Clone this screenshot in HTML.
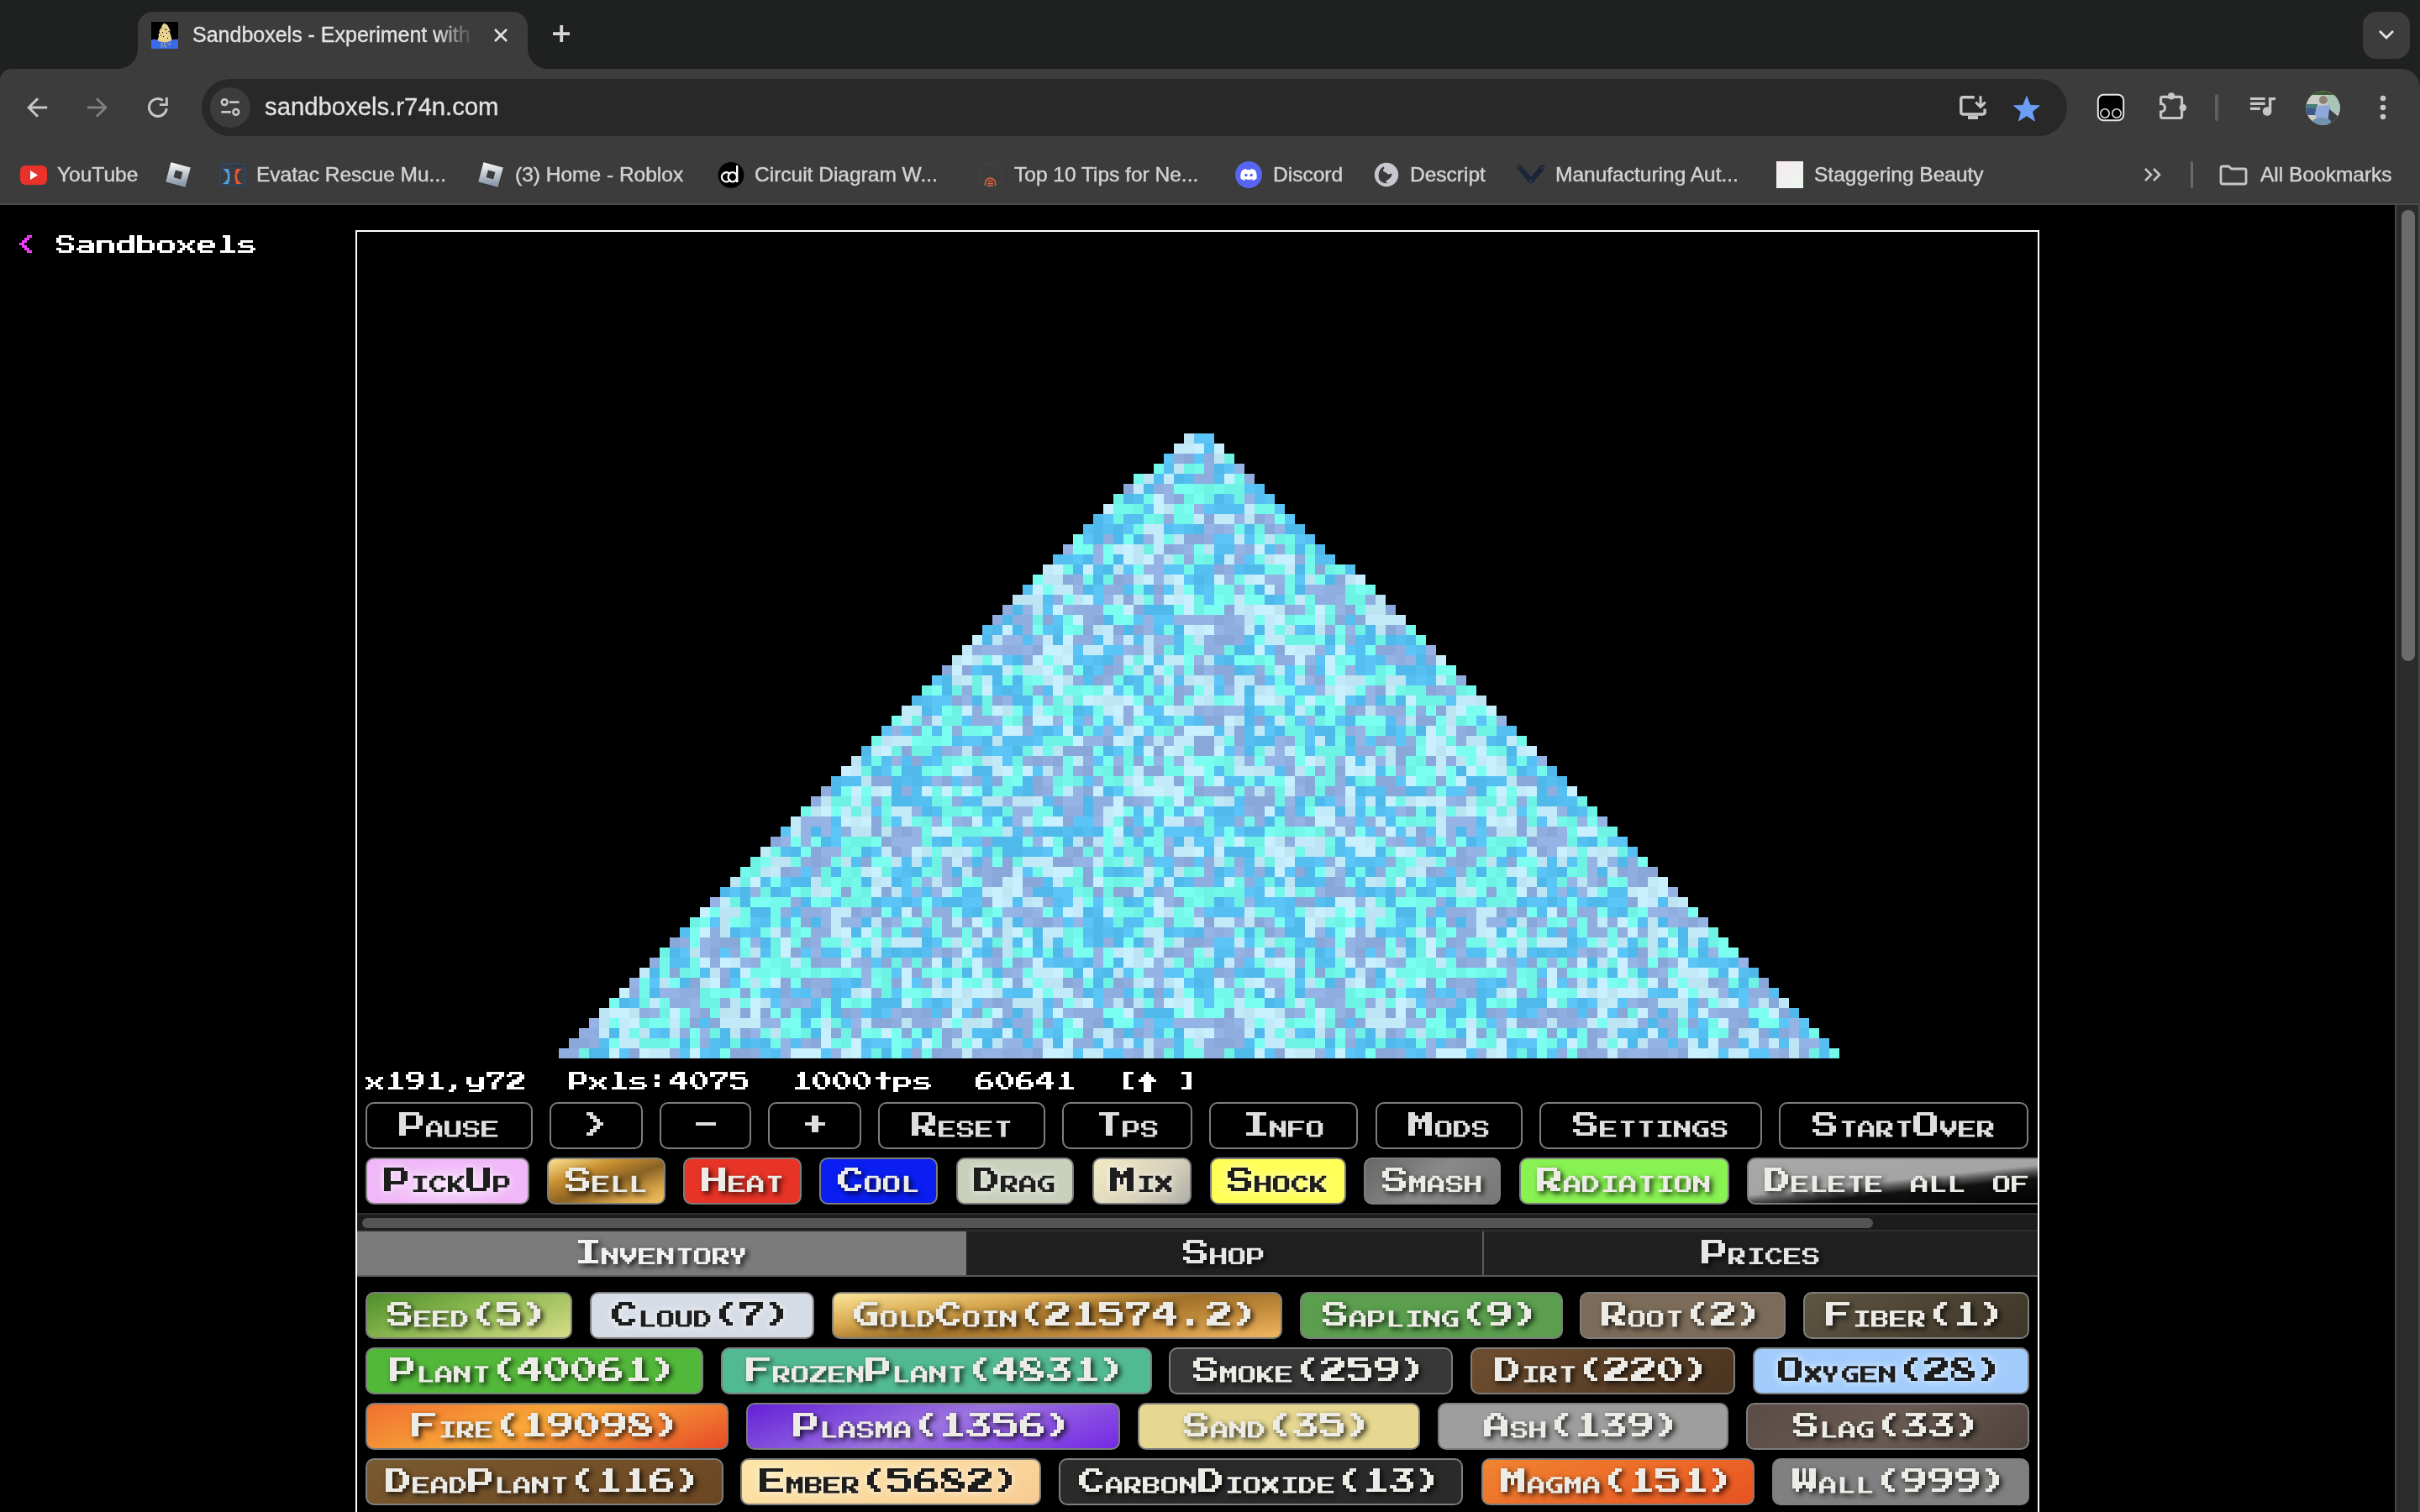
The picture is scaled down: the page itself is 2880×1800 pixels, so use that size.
<!DOCTYPE html><html><head><meta charset="utf-8"><title>Sandboxels</title><style>
*{box-sizing:border-box;margin:0;padding:0}
html,body{width:2880px;height:1800px;overflow:hidden;background:#000}
body{position:relative;font-family:"Liberation Sans",sans-serif}
div,span,svg{position:absolute}
.ch{color:#e3e3e3;font-size:25px;white-space:nowrap;line-height:30px;-webkit-text-stroke:0.35px #e3e3e3;will-change:transform}
.bm{color:#d2d2d2;font-size:24.5px;white-space:nowrap;line-height:30px;top:193px;-webkit-text-stroke:0.45px #d2d2d2;will-change:transform}
.px{font-family:"Liberation Mono",monospace;font-weight:bold;white-space:nowrap;position:absolute}
.st{color:#fff;font-size:32px;letter-spacing:4.8px;line-height:24px;top:1275px}
.btn{border:2px solid #7d7d7d;border-radius:10px;overflow:hidden}
.btn span{left:0;right:0;text-align:center;font-family:"Liberation Mono",monospace;font-weight:bold;white-space:nowrap;font-variant:small-caps}
.ctl{background:#000}
.ctl span{color:#dedede;font-size:43px;letter-spacing:5.5px;line-height:40px;top:9px}
.tool span{font-size:43px;letter-spacing:5.5px;line-height:40px;top:9px;color:#ecebe6;text-shadow:3px 3px 4px rgba(0,0,0,.75)}
.tool span.dk{color:#1e1e1e;text-shadow:0 0 6px rgba(255,255,255,.9)}
.inv span{font-size:42px;letter-spacing:5px;line-height:40px;top:7px;color:#ecebe6;text-shadow:3px 3px 4px rgba(0,0,0,.75)}
.inv span.dk{color:#1e1e1e;text-shadow:0 0 6px rgba(255,255,255,.9)}
.tlt{filter:drop-shadow(3px 3px 3px rgba(0,0,0,.8))}
.tdk{filter:drop-shadow(0 0 4px rgba(255,255,255,.9))}
</style></head><body><svg width="0" height="0" style="position:absolute;left:0;top:0"><defs><path id="uA" d="M2 0h3v1h-3zM1 1h2v1h-2zM4 1h2v1h-2zM0 2h2v1h-2zM5 2h2v1h-2zM0 3h2v1h-2zM5 3h2v1h-2zM0 4h7v1h-7zM0 5h2v1h-2zM5 5h2v1h-2zM0 6h2v1h-2zM5 6h2v1h-2z"/><path id="uB" d="M0 0h6v1h-6zM0 1h2v1h-2zM5 1h2v1h-2zM0 2h2v1h-2zM5 2h2v1h-2zM0 3h6v1h-6zM0 4h2v1h-2zM5 4h2v1h-2zM0 5h2v1h-2zM5 5h2v1h-2zM0 6h6v1h-6z"/><path id="uC" d="M2 0h4v1h-4zM1 1h2v1h-2zM5 1h2v1h-2zM0 2h2v1h-2zM0 3h2v1h-2zM0 4h2v1h-2zM1 5h2v1h-2zM5 5h2v1h-2zM2 6h4v1h-4z"/><path id="uD" d="M0 0h5v1h-5zM0 1h2v1h-2zM4 1h2v1h-2zM0 2h2v1h-2zM5 2h2v1h-2zM0 3h2v1h-2zM5 3h2v1h-2zM0 4h2v1h-2zM5 4h2v1h-2zM0 5h2v1h-2zM4 5h2v1h-2zM0 6h5v1h-5z"/><path id="uE" d="M0 0h7v1h-7zM0 1h2v1h-2zM0 2h2v1h-2zM0 3h6v1h-6zM0 4h2v1h-2zM0 5h2v1h-2zM0 6h7v1h-7z"/><path id="uF" d="M0 0h7v1h-7zM0 1h2v1h-2zM0 2h2v1h-2zM0 3h6v1h-6zM0 4h2v1h-2zM0 5h2v1h-2zM0 6h2v1h-2z"/><path id="uG" d="M2 0h5v1h-5zM1 1h2v1h-2zM0 2h2v1h-2zM0 3h2v1h-2zM4 3h3v1h-3zM0 4h2v1h-2zM5 4h2v1h-2zM1 5h2v1h-2zM5 5h2v1h-2zM2 6h5v1h-5z"/><path id="uH" d="M0 0h2v1h-2zM5 0h2v1h-2zM0 1h2v1h-2zM5 1h2v1h-2zM0 2h2v1h-2zM5 2h2v1h-2zM0 3h7v1h-7zM0 4h2v1h-2zM5 4h2v1h-2zM0 5h2v1h-2zM5 5h2v1h-2zM0 6h2v1h-2zM5 6h2v1h-2z"/><path id="uI" d="M1 0h6v1h-6zM3 1h2v1h-2zM3 2h2v1h-2zM3 3h2v1h-2zM3 4h2v1h-2zM3 5h2v1h-2zM1 6h6v1h-6z"/><path id="uK" d="M0 0h2v1h-2zM5 0h2v1h-2zM0 1h2v1h-2zM4 1h2v1h-2zM0 2h2v1h-2zM3 2h2v1h-2zM0 3h4v1h-4zM0 4h5v1h-5zM0 5h2v1h-2zM3 5h3v1h-3zM0 6h2v1h-2zM4 6h3v1h-3z"/><path id="uL" d="M1 0h2v1h-2zM1 1h2v1h-2zM1 2h2v1h-2zM1 3h2v1h-2zM1 4h2v1h-2zM1 5h2v1h-2zM1 6h6v1h-6z"/><path id="uM" d="M0 0h2v1h-2zM5 0h2v1h-2zM0 1h3v1h-3zM4 1h3v1h-3zM0 2h7v1h-7zM0 3h2v1h-2zM3 3h1v1h-1zM5 3h2v1h-2zM0 4h2v1h-2zM3 4h1v1h-1zM5 4h2v1h-2zM0 5h2v1h-2zM5 5h2v1h-2zM0 6h2v1h-2zM5 6h2v1h-2z"/><path id="uN" d="M0 0h2v1h-2zM5 0h2v1h-2zM0 1h3v1h-3zM5 1h2v1h-2zM0 2h4v1h-4zM5 2h2v1h-2zM0 3h2v1h-2zM3 3h4v1h-4zM0 4h2v1h-2zM4 4h3v1h-3zM0 5h2v1h-2zM5 5h2v1h-2zM0 6h2v1h-2zM5 6h2v1h-2z"/><path id="uO" d="M1 0h5v1h-5zM0 1h2v1h-2zM5 1h2v1h-2zM0 2h2v1h-2zM5 2h2v1h-2zM0 3h2v1h-2zM5 3h2v1h-2zM0 4h2v1h-2zM5 4h2v1h-2zM0 5h2v1h-2zM5 5h2v1h-2zM1 6h5v1h-5z"/><path id="uP" d="M0 0h6v1h-6zM0 1h2v1h-2zM5 1h2v1h-2zM0 2h2v1h-2zM5 2h2v1h-2zM0 3h2v1h-2zM5 3h2v1h-2zM0 4h6v1h-6zM0 5h2v1h-2zM0 6h2v1h-2z"/><path id="uR" d="M0 0h6v1h-6zM0 1h2v1h-2zM5 1h2v1h-2zM0 2h2v1h-2zM5 2h2v1h-2zM0 3h2v1h-2zM4 3h3v1h-3zM0 4h5v1h-5zM0 5h2v1h-2zM3 5h3v1h-3zM0 6h2v1h-2zM4 6h3v1h-3z"/><path id="uS" d="M1 0h5v1h-5zM0 1h2v1h-2zM5 1h2v1h-2zM0 2h2v1h-2zM1 3h5v1h-5zM5 4h2v1h-2zM0 5h2v1h-2zM5 5h2v1h-2zM1 6h5v1h-5z"/><path id="uT" d="M1 0h6v1h-6zM3 1h2v1h-2zM3 2h2v1h-2zM3 3h2v1h-2zM3 4h2v1h-2zM3 5h2v1h-2zM3 6h2v1h-2z"/><path id="uU" d="M0 0h2v1h-2zM5 0h2v1h-2zM0 1h2v1h-2zM5 1h2v1h-2zM0 2h2v1h-2zM5 2h2v1h-2zM0 3h2v1h-2zM5 3h2v1h-2zM0 4h2v1h-2zM5 4h2v1h-2zM0 5h2v1h-2zM5 5h2v1h-2zM1 6h5v1h-5z"/><path id="uV" d="M0 0h2v1h-2zM5 0h2v1h-2zM0 1h2v1h-2zM5 1h2v1h-2zM0 2h2v1h-2zM5 2h2v1h-2zM0 3h3v1h-3zM4 3h3v1h-3zM1 4h5v1h-5zM2 5h3v1h-3zM3 6h1v1h-1z"/><path id="uW" d="M0 0h2v1h-2zM3 0h1v1h-1zM5 0h2v1h-2zM0 1h2v1h-2zM3 1h1v1h-1zM5 1h2v1h-2zM0 2h2v1h-2zM3 2h1v1h-1zM5 2h2v1h-2zM0 3h2v1h-2zM3 3h1v1h-1zM5 3h2v1h-2zM0 4h7v1h-7zM0 5h3v1h-3zM4 5h3v1h-3zM1 6h1v1h-1zM5 6h1v1h-1z"/><path id="uX" d="M0 0h2v1h-2zM5 0h2v1h-2zM0 1h3v1h-3zM4 1h3v1h-3zM1 2h5v1h-5zM2 3h3v1h-3zM1 4h5v1h-5zM0 5h3v1h-3zM4 5h3v1h-3zM0 6h2v1h-2zM5 6h2v1h-2z"/><path id="uY" d="M0 0h2v1h-2zM4 0h2v1h-2zM0 1h2v1h-2zM4 1h2v1h-2zM0 2h2v1h-2zM4 2h2v1h-2zM1 3h4v1h-4zM2 4h2v1h-2zM2 5h2v1h-2zM2 6h2v1h-2z"/><path id="uZ" d="M0 0h7v1h-7zM4 1h3v1h-3zM3 2h3v1h-3zM2 3h3v1h-3zM1 4h3v1h-3zM0 5h3v1h-3zM0 6h7v1h-7z"/><path id="d0" d="M2 0h3v1h-3zM1 1h1v1h-1zM4 1h2v1h-2zM0 2h2v1h-2zM5 2h2v1h-2zM0 3h2v1h-2zM5 3h2v1h-2zM0 4h2v1h-2zM5 4h2v1h-2zM1 5h2v1h-2zM5 5h1v1h-1zM2 6h3v1h-3z"/><path id="d1" d="M3 0h2v1h-2zM2 1h3v1h-3zM3 2h2v1h-2zM3 3h2v1h-2zM3 4h2v1h-2zM3 5h2v1h-2zM1 6h6v1h-6z"/><path id="d2" d="M1 0h5v1h-5zM0 1h2v1h-2zM5 1h2v1h-2zM4 2h3v1h-3zM2 3h4v1h-4zM1 4h4v1h-4zM0 5h3v1h-3zM0 6h7v1h-7z"/><path id="d3" d="M1 0h6v1h-6zM4 1h2v1h-2zM3 2h2v1h-2zM2 3h4v1h-4zM5 4h2v1h-2zM0 5h2v1h-2zM5 5h2v1h-2zM1 6h5v1h-5z"/><path id="d4" d="M3 0h3v1h-3zM2 1h4v1h-4zM1 2h2v1h-2zM4 2h2v1h-2zM0 3h2v1h-2zM4 3h2v1h-2zM0 4h7v1h-7zM4 5h2v1h-2zM4 6h2v1h-2z"/><path id="d5" d="M0 0h6v1h-6zM0 1h2v1h-2zM0 2h6v1h-6zM5 3h2v1h-2zM5 4h2v1h-2zM0 5h2v1h-2zM5 5h2v1h-2zM1 6h5v1h-5z"/><path id="d6" d="M2 0h4v1h-4zM1 1h2v1h-2zM0 2h2v1h-2zM0 3h6v1h-6zM0 4h2v1h-2zM5 4h2v1h-2zM0 5h2v1h-2zM5 5h2v1h-2zM1 6h5v1h-5z"/><path id="d7" d="M0 0h7v1h-7zM0 1h2v1h-2zM5 1h2v1h-2zM4 2h2v1h-2zM3 3h2v1h-2zM2 4h2v1h-2zM2 5h2v1h-2zM2 6h2v1h-2z"/><path id="d8" d="M1 0h4v1h-4zM0 1h2v1h-2zM5 1h1v1h-1zM0 2h3v1h-3zM5 2h1v1h-1zM1 3h4v1h-4zM0 4h1v1h-1zM3 4h4v1h-4zM0 5h1v1h-1zM5 5h2v1h-2zM1 6h5v1h-5z"/><path id="d9" d="M1 0h5v1h-5zM0 1h2v1h-2zM5 1h2v1h-2zM0 2h2v1h-2zM5 2h2v1h-2zM1 3h6v1h-6zM5 4h2v1h-2zM4 5h2v1h-2zM1 6h4v1h-4z"/><path id="la" d="M1 2h5v1h-5zM5 3h2v1h-2zM1 4h6v1h-6zM0 5h2v1h-2zM5 5h2v1h-2zM1 6h6v1h-6z"/><path id="lb" d="M0 0h2v1h-2zM0 1h2v1h-2zM0 2h6v1h-6zM0 3h2v1h-2zM5 3h2v1h-2zM0 4h2v1h-2zM5 4h2v1h-2zM0 5h2v1h-2zM5 5h2v1h-2zM0 6h6v1h-6z"/><path id="ld" d="M5 0h2v1h-2zM5 1h2v1h-2zM1 2h6v1h-6zM0 3h2v1h-2zM5 3h2v1h-2zM0 4h2v1h-2zM5 4h2v1h-2zM0 5h2v1h-2zM5 5h2v1h-2zM1 6h6v1h-6z"/><path id="le" d="M1 2h5v1h-5zM0 3h2v1h-2zM5 3h2v1h-2zM0 4h7v1h-7zM0 5h2v1h-2zM1 6h5v1h-5z"/><path id="ll" d="M2 0h3v1h-3zM3 1h2v1h-2zM3 2h2v1h-2zM3 3h2v1h-2zM3 4h2v1h-2zM3 5h2v1h-2zM1 6h6v1h-6z"/><path id="ln" d="M0 2h6v1h-6zM0 3h2v1h-2zM5 3h2v1h-2zM0 4h2v1h-2zM5 4h2v1h-2zM0 5h2v1h-2zM5 5h2v1h-2zM0 6h2v1h-2zM5 6h2v1h-2z"/><path id="lo" d="M1 2h5v1h-5zM0 3h2v1h-2zM5 3h2v1h-2zM0 4h2v1h-2zM5 4h2v1h-2zM0 5h2v1h-2zM5 5h2v1h-2zM1 6h5v1h-5z"/><path id="lp" d="M0 2h6v1h-6zM0 3h2v1h-2zM5 3h2v1h-2zM0 4h2v1h-2zM5 4h2v1h-2zM0 5h6v1h-6zM0 6h2v1h-2zM0 7h2v1h-2z"/><path id="ls" d="M1 2h5v1h-5zM0 3h2v1h-2zM1 4h5v1h-5zM5 5h2v1h-2zM0 6h6v1h-6z"/><path id="lt" d="M3 0h2v1h-2zM3 1h2v1h-2zM1 2h6v1h-6zM3 3h2v1h-2zM3 4h2v1h-2zM3 5h2v1h-2zM3 6h2v1h-2z"/><path id="lx" d="M0 2h2v1h-2zM5 2h2v1h-2zM1 3h2v1h-2zM4 3h2v1h-2zM2 4h3v1h-3zM1 5h2v1h-2zM4 5h2v1h-2zM0 6h2v1h-2zM5 6h2v1h-2z"/><path id="ly" d="M0 2h2v1h-2zM5 2h2v1h-2zM0 3h2v1h-2zM5 3h2v1h-2zM0 4h2v1h-2zM5 4h2v1h-2zM1 5h6v1h-6zM5 6h2v1h-2zM1 7h5v1h-5z"/><path id="p40" d="M4 0h2v1h-2zM3 1h2v1h-2zM2 2h2v1h-2zM2 3h2v1h-2zM2 4h2v1h-2zM3 5h2v1h-2zM4 6h2v1h-2z"/><path id="p41" d="M1 0h2v1h-2zM2 1h2v1h-2zM3 2h2v1h-2zM3 3h2v1h-2zM3 4h2v1h-2zM2 5h2v1h-2zM1 6h2v1h-2z"/><path id="p44" d="M2 5h2v1h-2zM2 6h2v1h-2zM1 7h2v1h-2z"/><path id="p46" d="M2 5h2v1h-2zM2 6h2v1h-2z"/><path id="p58" d="M2 1h2v1h-2zM2 2h2v1h-2zM2 4h2v1h-2zM2 5h2v1h-2z"/><path id="p91" d="M1 0h4v1h-4zM1 1h2v1h-2zM1 2h2v1h-2zM1 3h2v1h-2zM1 4h2v1h-2zM1 5h2v1h-2zM1 6h4v1h-4z"/><path id="p93" d="M1 0h4v1h-4zM3 1h2v1h-2zM3 2h2v1h-2zM3 3h2v1h-2zM3 4h2v1h-2zM3 5h2v1h-2zM1 6h4v1h-4z"/><path id="p60" d="M4 0h2v1h-2zM3 1h2v1h-2zM2 2h2v1h-2zM1 3h2v1h-2zM2 4h2v1h-2zM3 5h2v1h-2zM4 6h2v1h-2z"/><path id="p62" d="M1 0h2v1h-2zM2 1h2v1h-2zM3 2h2v1h-2zM4 3h2v1h-2zM3 4h2v1h-2zM2 5h2v1h-2zM1 6h2v1h-2z"/><path id="p45" d="M1 3h6v1h-6z"/><path id="p43" d="M3 1h2v1h-2zM3 2h2v1h-2zM1 3h6v1h-6zM3 4h2v1h-2zM3 5h2v1h-2z"/><path id="p94" d="M3 0h1v1h-1zM2 1h3v1h-3zM1 2h5v1h-5zM0 3h7v1h-7zM2 4h3v1h-3zM2 5h3v1h-3zM2 6h3v1h-3zM2 7h3v1h-3z"/></defs></svg><div style="left:0px;top:0px;width:2880px;height:120px;background:#1f2020"></div><div style="left:0px;top:82px;width:2880px;height:162px;background:#3c3c3c;border-radius:14px 22px 0 0"></div><div style="left:164px;top:14px;width:464px;height:80px;background:#3c3c3c;border-radius:18px 18px 0 0"></div><div style="left:140px;top:58px;width:24px;height:24px;background:radial-gradient(circle at 0 0,#1f2020 23.5px,#3c3c3c 24.5px)"></div><div style="left:628px;top:58px;width:24px;height:24px;background:radial-gradient(circle at 100% 0,#1f2020 23.5px,#3c3c3c 24.5px)"></div><svg style="left:180px;top:26px" width="32" height="32" viewBox="0 0 32 32"><rect width="32" height="32" fill="#000"/><path d="M0 21.5L2 21L3 20L4 21L7 21.3L9 22L9 32H0Z M23 21L26 21.5L28 20.5L30 21L32 20.5V32H23Z" fill="#3a6ae8"/><rect x="0" y="22" width="32" height="10" fill="#3a6ae8"/><path d="M15 1.5L17 2.5L19 3.5L20.5 6L21.5 8.5L22.5 10L22 12.5L23 15L23.5 17.5L24.5 20L24 22.5L21 23.5L17 24.5L13 24L10 23.5L7.5 22.5L8 20L9 17.5L8.5 15L10 13L9.5 10.5L11 8.5L12 6L13.5 3.5Z" fill="#e7d38e"/><path d="M12 6.5h1v1h-1zM17 9h1.5v1h-1.5zM13 12h1v1h-1zM18 13h1v1h-1zM14 17h1v1h-1zM19 19h1v1h-1zM16 8h1v1h-1zM20.5 11h1v1h-1zM11 15.5h1v1h-1z" fill="#000"/><path d="M11 27L14 25M16 25L15 30M19 25L22 28M13 27L12 31M18 28L17 31M21 26L24 26" stroke="#c9b57c" stroke-width="0.9"/></svg><div class="ch" style="left:229px;top:26px;width:336px;height:32px;overflow:hidden;-webkit-mask-image:linear-gradient(90deg,#000 0,#000 290px,transparent 336px)">Sandboxels - Experiment with Physics</div><svg style="left:586px;top:32px" width="20" height="20" viewBox="0 0 20 20"><path d="M3 3L17 17M17 3L3 17" stroke="#e3e3e3" stroke-width="2.6"/></svg><svg style="left:657.8px;top:30px" width="20.4" height="20.4" viewBox="0 0 20.4 20.4"><path d="M10.2 0V20.4M0 10.2H20.4" stroke="#d6d6d6" stroke-width="3.8"/></svg><div style="left:2812px;top:14px;width:56px;height:56px;background:#3c3c3c;border-radius:16px"></div><svg style="left:2830px;top:34px" width="20" height="14" viewBox="0 0 20 14"><path d="M2 3L10 11L18 3" fill="none" stroke="#e3e3e3" stroke-width="2.8"/></svg><svg style="left:32px;top:116px" width="26" height="24" viewBox="0 0 26 24"><path d="M24.2 12H2.5M13 1.2L2.2 12L13 22.8" fill="none" stroke="#c7c7c7" stroke-width="3"/></svg><svg style="left:102px;top:116px" width="26" height="24" viewBox="0 0 26 24"><path d="M1.8 12H23.5M13 1.2L23.8 12L13 22.8" fill="none" stroke="#7f7f7f" stroke-width="3"/></svg><svg style="left:176px;top:116px" width="25" height="25" viewBox="0 0 25 25"><path d="M22.2 13.2A10.4 10.4 0 1 1 17.8 3.4" fill="none" stroke="#c7c7c7" stroke-width="3"/><path d="M20.9 0.1H23.8V9.9H13.9V7.3H20.9Z" fill="#c7c7c7"/></svg><div style="left:240px;top:94px;width:2220px;height:68px;background:#282828;border-radius:34px"></div><div style="left:250px;top:104px;width:48px;height:48px;background:#3c3c3c;border-radius:24px"></div><svg style="left:260px;top:114px" width="28" height="28" viewBox="0 0 28 28"><circle cx="7.2" cy="7.6" r="3.4" fill="none" stroke="#c7c7c7" stroke-width="2.6"/><path d="M13 7.6H24.6M3.4 19.4H15" stroke="#c7c7c7" stroke-width="2.8"/><circle cx="20.8" cy="19.4" r="3.4" fill="none" stroke="#c7c7c7" stroke-width="2.6"/></svg><div class="ch" style="left:315px;top:109px;font-size:29.3px;line-height:36px;font-weight:normal;-webkit-text-stroke:0.3px #e3e3e3">sandboxels.r74n.com</div><svg style="left:2332px;top:112px" width="34" height="32" viewBox="0 0 34 32"><path d="M17.75 3.8H4.2Q1.8 3.8 1.8 6.2V21.6Q1.8 24 4.2 24H27.7Q30.1 24 30.1 21.6V17.5" fill="none" stroke="#c7c7c7" stroke-width="3.4"/><path d="M25 2.3V15.5M19.3 9.6L25 15.3L30.7 9.6" fill="none" stroke="#c7c7c7" stroke-width="3"/><rect x="10" y="25.8" width="12" height="4.2" fill="#c7c7c7"/></svg><svg style="left:2394px;top:113px" width="36" height="34" viewBox="0 0 36 34"><polygon points="17.90,1.60 22.01,12.19 33.35,12.83 24.56,20.01 27.45,31.00 17.90,24.85 8.35,31.00 11.24,20.01 2.45,12.83 13.79,12.19" fill="#6d9ef5" stroke="#6d9ef5" stroke-width="0.8" stroke-linejoin="round"/></svg><svg style="left:2495px;top:111px" width="34" height="34" viewBox="0 0 34 34"><rect x="1.8" y="1.8" width="30.4" height="30.4" rx="6.5" fill="#000" stroke="#e6e6e6" stroke-width="2"/><circle cx="10" cy="24" r="5.2" fill="none" stroke="#e6e6e6" stroke-width="1.6"/><circle cx="24" cy="24" r="5.2" fill="none" stroke="#e6e6e6" stroke-width="1.6"/></svg><svg style="left:2568px;top:108px" width="36" height="36" viewBox="0 0 36 36"><path d="M3.6 9.4Q3.6 7.4 5.6 7.4H26.6Q28.6 7.4 28.6 9.4V30.5Q28.6 32.5 26.6 32.5H5.6Q3.6 32.5 3.6 30.5V25A4.6 4.6 0 0 0 3.6 15.4Z" fill="none" stroke="#c7c7c7" stroke-width="3.1"/><circle cx="16.1" cy="6.4" r="4.1" fill="#c7c7c7"/><circle cx="29.8" cy="20.2" r="4.1" fill="#c7c7c7"/></svg><div style="left:2636px;top:112px;width:4px;height:32px;background:#5e5e5e;border-radius:2px"></div><svg style="left:2676px;top:112px" width="36" height="28" viewBox="0 0 36 28"><path d="M2 5.5H19.7M2 11.4H19.7M2 17.3H13.8" stroke="#c7c7c7" stroke-width="3.2"/><path d="M25.6 4V20.5" stroke="#c7c7c7" stroke-width="3.4"/><path d="M24 5.6H32" stroke="#c7c7c7" stroke-width="3.2"/><circle cx="22.1" cy="20.5" r="5.3" fill="#c7c7c7"/></svg><svg style="left:2744px;top:108px" width="41" height="41" viewBox="0 0 41 41"><defs><clipPath id="avc"><circle cx="20.5" cy="20.5" r="20.3"/></clipPath></defs><g clip-path="url(#avc)"><rect width="41" height="41" fill="#c9ccc6"/><rect x="0" y="0" width="41" height="5" fill="#3e5a34"/><rect x="26" y="5" width="15" height="22" fill="#a9c4b4"/><rect x="0" y="16" width="14" height="6" fill="#4a7a7a"/><rect x="0" y="21" width="12" height="8" fill="#3d5a8a"/><circle cx="21" cy="11" r="5" fill="#8d8177"/><path d="M13 18L28 17L32 28L28 36L14 36L11 28Z" fill="#8fa8d8"/><path d="M28 22L38 30L36 41L26 41Z" fill="#3a3f48"/><ellipse cx="19" cy="37" rx="11" ry="5" fill="#6f93b0"/><path d="M0 34L8 41H0Z" fill="#d69540"/></g></svg><svg style="left:2830px;top:111px" width="12" height="34" viewBox="0 0 12 34"><circle cx="6" cy="6" r="3.3" fill="#c7c7c7"/><circle cx="6" cy="17" r="3.3" fill="#c7c7c7"/><circle cx="6" cy="28" r="3.3" fill="#c7c7c7"/></svg><svg style="left:24px;top:197px" width="32" height="23" viewBox="0 0 32 23"><rect width="32" height="23" rx="6" fill="#e8322a"/><path d="M12 6L21 11.5L12 17Z" fill="#fff"/></svg><div class="bm" style="left:68px">YouTube</div><svg style="left:196px;top:190px" width="34" height="36" viewBox="0 0 34 36"><defs><linearGradient id="rb196" x1="0" y1="0" x2="0.3" y2="1"><stop offset="0" stop-color="#ffffff"/><stop offset="1" stop-color="#8f9cab"/></linearGradient></defs><g transform="rotate(15 16 18)"><path fill-rule="evenodd" d="M3.5 5.5H28.5V30.5H3.5Z M12 14H20V22H12Z" fill="url(#rb196)" stroke="#222" stroke-width="0.6"/></g></svg><svg style="left:261px;top:194px" width="31" height="27" viewBox="0 0 31 27"><rect x="1" y="1" width="29" height="25" rx="1.5" fill="none" stroke="#2e4560" stroke-width="2"/><path d="M2 6H29" stroke="#2e4560" stroke-width="1.4"/><circle cx="19" cy="3.6" r="0.9" fill="#1a2533"/><circle cx="23" cy="3.6" r="0.9" fill="#1a2533"/><circle cx="27" cy="3.6" r="0.9" fill="#1a2533"/><path d="M3.5 7C8 9 10 13 10 16C10 19 8 23 3.5 25H11V22.5L12.5 21.5L11.5 19.5L13 18L12 16L13 14L11.5 12.5L12.5 10.5L11 9.5V7Z" fill="#4ea3e0"/><path d="M27.5 7C23 9 21 13 21 16C21 19 23 23 27.5 25H20V22.5L18.5 21.5L19.5 19.5L18 18L19 16L18 14L19.5 12.5L18.5 10.5L20 9.5V7Z" fill="#e2573c"/></svg><div class="bm" style="left:305px">Evatac Rescue Mu...</div><svg style="left:568px;top:190px" width="34" height="36" viewBox="0 0 34 36"><defs><linearGradient id="rb568" x1="0" y1="0" x2="0.3" y2="1"><stop offset="0" stop-color="#ffffff"/><stop offset="1" stop-color="#8f9cab"/></linearGradient></defs><g transform="rotate(15 16 18)"><path fill-rule="evenodd" d="M3.5 5.5H28.5V30.5H3.5Z M12 14H20V22H12Z" fill="url(#rb568)" stroke="#222" stroke-width="0.6"/></g></svg><div class="bm" style="left:613px">(3) Home - Roblox</div><svg style="left:854px;top:192px" width="32" height="32" viewBox="0 0 32 32"><circle cx="16" cy="16.3" r="15.4" fill="#000"/><circle cx="10.5" cy="18.8" r="5.6" fill="none" stroke="#fff" stroke-width="2.2" stroke-dasharray="27 8" transform="rotate(30 10.5 18.8)"/><ellipse cx="17.8" cy="18.8" rx="5.2" ry="5.6" fill="none" stroke="#fff" stroke-width="2.2"/><path d="M23.2 5V25" stroke="#fff" stroke-width="2.4"/></svg><div class="bm" style="left:898px">Circuit Diagram W...</div><svg style="left:1163px;top:193px" width="31" height="31" viewBox="0 0 31 31"><circle cx="15.5" cy="15.5" r="14" fill="none" stroke="#454545" stroke-width="1"/><path d="M9.5 28V25A6 6 0 0 1 21.5 25V28" fill="none" stroke="#e0643a" stroke-width="1.6"/><path d="M12.5 22.5H18.5M12 25.5H19M12 28H19" stroke="#e0643a" stroke-width="1.3"/></svg><div class="bm" style="left:1207px">Top 10 Tips for Ne...</div><svg style="left:1470px;top:192px" width="32" height="32" viewBox="0 0 32 32"><circle cx="16" cy="16" r="16" fill="#5865f2"/><path d="M8 11C10 9.5 12 9 13 9L13.6 10.2C15 10 17 10 18.4 10.2L19 9C20 9 22 9.5 24 11C25.5 14 26 17 25.6 20.5C24 21.8 22.5 22.5 21 23L20 21.5C21 21.2 21.6 20.8 22 20.5C18 22.4 14 22.4 10 20.5C10.4 20.8 11 21.2 12 21.5L11 23C9.5 22.5 8 21.8 6.4 20.5C6 17 6.5 14 8 11Z" fill="#fff"/><circle cx="12.8" cy="16.5" r="1.8" fill="#5865f2"/><circle cx="19.2" cy="16.5" r="1.8" fill="#5865f2"/></svg><div class="bm" style="left:1515px">Discord</div><svg style="left:1635px;top:193px" width="30" height="30" viewBox="0 0 30 30"><circle cx="15" cy="15" r="14.2" fill="#c6c8ce"/><path d="M6.5 21C4.5 15 6 9 11 5.5C12.5 6 13 7.5 11.5 8.5C10.5 9.5 11 11 12.5 11.5C14 12 15 13 16.5 14.2C18 14.8 19.5 14 21 13.5C22 14 21 18 18 20C16 21.5 15 22 14 23.5C15 24.8 16.5 25 18 25C14 26 9.5 25 6.5 21Z" fill="#3a3a3a"/></svg><div class="bm" style="left:1678px">Descript</div><svg style="left:1805px;top:196px" width="34" height="24" viewBox="0 0 34 24"><path d="M3.6 3.8L17 19.2L30.4 3.8" fill="none" stroke="#1b2538" stroke-width="6" stroke-linecap="round" stroke-linejoin="round"/><circle cx="3.6" cy="3.8" r="1" fill="#3d4d66"/><circle cx="30.4" cy="3.8" r="1" fill="#3d4d66"/><circle cx="17" cy="19.2" r="1" fill="#3d4d66"/></svg><div class="bm" style="left:1851px">Manufacturing Aut...</div><div style="left:2114px;top:192px;width:32px;height:32px;background:linear-gradient(135deg,#f8e8ee,#e8f8ee)"></div><div class="bm" style="left:2159px">Staggering Beauty</div><svg style="left:2551px;top:199px" width="22" height="18" viewBox="0 0 22 18"><path d="M2 2L9 9L2 16M12 2L19 9L12 16" fill="none" stroke="#c7c7c7" stroke-width="2.6"/></svg><div style="left:2607px;top:192px;width:3px;height:32px;background:#6a6a6a;border-radius:2px"></div><svg style="left:2641px;top:195px" width="34" height="26" viewBox="0 0 34 26"><path d="M4 3H11.5L14.5 6H30Q32 6 32 8V22Q32 24 30 24H4Q2 24 2 22V5Q2 3 4 3Z" fill="none" stroke="#c7c7c7" stroke-width="2.8" stroke-linejoin="round"/></svg><div class="bm" style="left:2690px">All Bookmarks</div><div style="left:0px;top:242px;width:2880px;height:2px;background:#4a4a4a"></div><div style="left:2850px;top:244px;width:30px;height:1556px;background:#2c2c2c;border-left:2px solid #474747;border-right:2px solid #474747"></div><div style="left:2858px;top:250px;width:16px;height:537px;background:#6b6b6b;border-radius:8px"></div><svg style="left:20.00px;top:278.00px;" width="32" height="30" fill="#ec3ef6"><use href="#p60" transform="translate(0.00 2.00) scale(3.000)"/></svg><svg style="left:67.00px;top:278.00px;" width="248" height="30" fill="#fff"><use href="#uS" transform="translate(0.00 2.00) scale(3.000)"/><use href="#la" transform="translate(24.00 2.00) scale(3.000)"/><use href="#ln" transform="translate(48.00 2.00) scale(3.000)"/><use href="#ld" transform="translate(72.00 2.00) scale(3.000)"/><use href="#lb" transform="translate(96.00 2.00) scale(3.000)"/><use href="#lo" transform="translate(120.00 2.00) scale(3.000)"/><use href="#lx" transform="translate(144.00 2.00) scale(3.000)"/><use href="#le" transform="translate(168.00 2.00) scale(3.000)"/><use href="#ll" transform="translate(192.00 2.00) scale(3.000)"/><use href="#ls" transform="translate(216.00 2.00) scale(3.000)"/></svg><div style="left:423px;top:274px;width:2004px;height:1600px;border:2px solid #fff;border-bottom:none"></div><svg style="left:600px;top:500px" width="1650" height="780" viewBox="0 0 1650 780"><defs><pattern id="pp" x="5" y="4" width="768" height="480" patternUnits="userSpaceOnUse"><path fill="#74f8ea" d="M0 0h12v12h-12zM144 0h12v12h-12zM168 0h12v12h-12zM492 0h12v12h-12zM564 0h12v12h-12zM576 0h12v12h-12zM0 12h12v12h-12zM204 12h12v12h-12zM264 12h12v12h-12zM396 12h12v12h-12zM528 12h12v12h-12zM648 12h12v12h-12zM732 12h12v12h-12zM120 24h12v12h-12zM168 24h12v12h-12zM312 24h12v12h-12zM408 24h12v12h-12zM504 24h12v12h-12zM336 36h12v12h-12zM384 36h12v12h-12zM720 36h12v12h-12zM0 48h12v12h-12zM48 48h12v12h-12zM240 48h12v12h-12zM276 48h12v12h-12zM396 48h12v12h-12zM492 48h12v12h-12zM624 48h12v12h-12zM672 48h12v12h-12zM96 60h12v12h-12zM408 60h12v12h-12zM552 60h12v12h-12zM708 60h12v12h-12zM732 60h12v12h-12zM744 60h12v12h-12zM48 72h12v12h-12zM72 72h12v12h-12zM144 72h12v12h-12zM180 72h12v12h-12zM408 72h12v12h-12zM528 72h12v12h-12zM672 72h12v12h-12zM312 84h12v12h-12zM324 84h12v12h-12zM372 84h12v12h-12zM420 84h12v12h-12zM708 84h12v12h-12zM756 84h12v12h-12zM24 96h12v12h-12zM120 96h12v12h-12zM132 96h12v12h-12zM168 96h12v12h-12zM276 96h12v12h-12zM312 96h12v12h-12zM492 96h12v12h-12zM720 96h12v12h-12zM732 96h12v12h-12zM24 108h12v12h-12zM36 108h12v12h-12zM204 108h12v12h-12zM276 108h12v12h-12zM312 108h12v12h-12zM468 108h12v12h-12zM504 108h12v12h-12zM756 108h12v12h-12zM96 120h12v12h-12zM300 120h12v12h-12zM432 120h12v12h-12zM456 120h12v12h-12zM504 120h12v12h-12zM540 120h12v12h-12zM672 120h12v12h-12zM744 120h12v12h-12zM12 132h12v12h-12zM120 132h12v12h-12zM156 132h12v12h-12zM336 132h12v12h-12zM372 132h12v12h-12zM384 132h12v12h-12zM420 132h12v12h-12zM540 132h12v12h-12zM276 144h12v12h-12zM396 144h12v12h-12zM636 144h12v12h-12zM24 156h12v12h-12zM48 156h12v12h-12zM120 156h12v12h-12zM180 156h12v12h-12zM216 156h12v12h-12zM312 156h12v12h-12zM348 156h12v12h-12zM36 168h12v12h-12zM132 168h12v12h-12zM144 168h12v12h-12zM180 168h12v12h-12zM216 168h12v12h-12zM288 168h12v12h-12zM300 168h12v12h-12zM384 168h12v12h-12zM432 168h12v12h-12zM492 168h12v12h-12zM528 168h12v12h-12zM612 168h12v12h-12zM660 168h12v12h-12zM96 180h12v12h-12zM156 180h12v12h-12zM552 180h12v12h-12zM684 180h12v12h-12zM72 192h12v12h-12zM84 192h12v12h-12zM108 192h12v12h-12zM156 192h12v12h-12zM252 192h12v12h-12zM492 192h12v12h-12zM744 192h12v12h-12zM84 204h12v12h-12zM180 204h12v12h-12zM276 204h12v12h-12zM372 204h12v12h-12zM756 204h12v12h-12zM204 216h12v12h-12zM240 216h12v12h-12zM336 216h12v12h-12zM660 228h12v12h-12zM12 240h12v12h-12zM144 240h12v12h-12zM300 240h12v12h-12zM432 240h12v12h-12zM504 240h12v12h-12zM672 240h12v12h-12zM36 252h12v12h-12zM216 252h12v12h-12zM312 252h12v12h-12zM384 252h12v12h-12zM468 252h12v12h-12zM504 252h12v12h-12zM540 252h12v12h-12zM36 264h12v12h-12zM48 264h12v12h-12zM492 264h12v12h-12zM216 276h12v12h-12zM372 276h12v12h-12zM492 276h12v12h-12zM564 276h12v12h-12zM36 288h12v12h-12zM168 288h12v12h-12zM600 288h12v12h-12zM732 288h12v12h-12zM144 300h12v12h-12zM372 300h12v12h-12zM588 300h12v12h-12zM612 300h12v12h-12zM720 300h12v12h-12zM756 300h12v12h-12zM288 312h12v12h-12zM372 312h12v12h-12zM660 312h12v12h-12zM672 312h12v12h-12zM696 312h12v12h-12zM756 312h12v12h-12zM0 324h12v12h-12zM36 324h12v12h-12zM72 324h12v12h-12zM168 324h12v12h-12zM204 324h12v12h-12zM180 336h12v12h-12zM660 336h12v12h-12zM696 336h12v12h-12zM24 348h12v12h-12zM156 348h12v12h-12zM396 348h12v12h-12zM744 348h12v12h-12zM0 360h12v12h-12zM252 360h12v12h-12zM336 360h12v12h-12zM540 360h12v12h-12zM552 360h12v12h-12zM84 372h12v12h-12zM216 372h12v12h-12zM312 372h12v12h-12zM432 372h12v12h-12zM492 372h12v12h-12zM504 372h12v12h-12zM396 384h12v12h-12zM636 384h12v12h-12zM12 396h12v12h-12zM72 396h12v12h-12zM300 396h12v12h-12zM432 396h12v12h-12zM528 396h12v12h-12zM660 396h12v12h-12zM12 408h12v12h-12zM24 408h12v12h-12zM456 408h12v12h-12zM492 408h12v12h-12zM600 408h12v12h-12zM660 408h12v12h-12zM696 408h12v12h-12zM732 408h12v12h-12zM36 420h12v12h-12zM108 420h12v12h-12zM192 420h12v12h-12zM252 420h12v12h-12zM324 420h12v12h-12zM588 420h12v12h-12zM660 420h12v12h-12zM708 420h12v12h-12zM96 432h12v12h-12zM336 432h12v12h-12zM504 432h12v12h-12zM528 432h12v12h-12zM576 432h12v12h-12zM588 432h12v12h-12zM648 432h12v12h-12zM732 432h12v12h-12zM60 444h12v12h-12zM288 444h12v12h-12zM420 444h12v12h-12zM516 444h12v12h-12zM252 456h12v12h-12zM312 456h12v12h-12zM348 456h12v12h-12zM444 456h12v12h-12zM624 456h12v12h-12zM636 456h12v12h-12zM108 468h12v12h-12zM144 468h12v12h-12zM312 468h12v12h-12zM480 468h12v12h-12zM624 468h12v12h-12zM720 468h12v12h-12z"/><path fill="#5bc5f8" d="M12 0h12v12h-12zM24 0h12v12h-12zM36 0h12v12h-12zM72 0h12v12h-12zM96 0h12v12h-12zM252 0h12v12h-12zM288 0h12v12h-12zM324 0h12v12h-12zM384 0h12v12h-12zM48 12h12v12h-12zM60 12h12v12h-12zM300 12h12v12h-12zM384 12h12v12h-12zM540 12h12v12h-12zM552 12h12v12h-12zM228 24h12v12h-12zM432 24h12v12h-12zM636 24h12v12h-12zM720 24h12v12h-12zM0 36h12v12h-12zM12 36h12v12h-12zM48 36h12v12h-12zM192 36h12v12h-12zM228 36h12v12h-12zM264 36h12v12h-12zM492 36h12v12h-12zM84 48h12v12h-12zM156 48h12v12h-12zM348 48h12v12h-12zM456 48h12v12h-12zM612 48h12v12h-12zM744 48h12v12h-12zM120 60h12v12h-12zM324 60h12v12h-12zM468 60h12v12h-12zM108 72h12v12h-12zM264 72h12v12h-12zM468 72h12v12h-12zM648 72h12v12h-12zM660 72h12v12h-12zM84 84h12v12h-12zM132 84h12v12h-12zM144 84h12v12h-12zM384 84h12v12h-12zM444 84h12v12h-12zM456 84h12v12h-12zM480 84h12v12h-12zM504 84h12v12h-12zM540 84h12v12h-12zM552 84h12v12h-12zM660 84h12v12h-12zM696 84h12v12h-12zM60 96h12v12h-12zM144 96h12v12h-12zM648 96h12v12h-12zM756 96h12v12h-12zM156 108h12v12h-12zM240 108h12v12h-12zM288 108h12v12h-12zM660 108h12v12h-12zM684 108h12v12h-12zM708 108h12v12h-12zM24 120h12v12h-12zM276 120h12v12h-12zM732 120h12v12h-12zM72 132h12v12h-12zM84 132h12v12h-12zM108 132h12v12h-12zM168 132h12v12h-12zM504 132h12v12h-12zM684 132h12v12h-12zM204 144h12v12h-12zM252 144h12v12h-12zM348 144h12v12h-12zM552 144h12v12h-12zM108 156h12v12h-12zM432 156h12v12h-12zM636 156h12v12h-12zM672 156h12v12h-12zM12 168h12v12h-12zM24 168h12v12h-12zM456 168h12v12h-12zM732 168h12v12h-12zM36 180h12v12h-12zM168 180h12v12h-12zM264 180h12v12h-12zM396 180h12v12h-12zM480 180h12v12h-12zM516 180h12v12h-12zM12 192h12v12h-12zM60 192h12v12h-12zM300 192h12v12h-12zM336 192h12v12h-12zM456 192h12v12h-12zM588 192h12v12h-12zM696 192h12v12h-12zM60 204h12v12h-12zM312 204h12v12h-12zM492 204h12v12h-12zM516 204h12v12h-12zM552 204h12v12h-12zM696 204h12v12h-12zM420 216h12v12h-12zM444 216h12v12h-12zM540 216h12v12h-12zM636 216h12v12h-12zM0 228h12v12h-12zM12 228h12v12h-12zM396 228h12v12h-12zM648 228h12v12h-12zM744 228h12v12h-12zM168 240h12v12h-12zM636 240h12v12h-12zM432 252h12v12h-12zM444 252h12v12h-12zM480 252h12v12h-12zM132 264h12v12h-12zM204 264h12v12h-12zM228 264h12v12h-12zM300 264h12v12h-12zM372 264h12v12h-12zM420 264h12v12h-12zM468 264h12v12h-12zM672 264h12v12h-12zM708 264h12v12h-12zM720 264h12v12h-12zM192 276h12v12h-12zM252 276h12v12h-12zM396 276h12v12h-12zM480 276h12v12h-12zM588 276h12v12h-12zM684 276h12v12h-12zM156 288h12v12h-12zM252 288h12v12h-12zM456 288h12v12h-12zM468 288h12v12h-12zM480 288h12v12h-12zM552 288h12v12h-12zM696 288h12v12h-12zM72 300h12v12h-12zM132 300h12v12h-12zM156 300h12v12h-12zM312 300h12v12h-12zM456 300h12v12h-12zM504 300h12v12h-12zM0 312h12v12h-12zM168 312h12v12h-12zM180 312h12v12h-12zM420 312h12v12h-12zM720 312h12v12h-12zM156 324h12v12h-12zM228 324h12v12h-12zM348 324h12v12h-12zM504 324h12v12h-12zM516 324h12v12h-12zM0 336h12v12h-12zM120 336h12v12h-12zM504 336h12v12h-12zM612 336h12v12h-12zM756 336h12v12h-12zM12 348h12v12h-12zM36 348h12v12h-12zM168 348h12v12h-12zM216 348h12v12h-12zM384 348h12v12h-12zM540 348h12v12h-12zM672 348h12v12h-12zM708 348h12v12h-12zM132 360h12v12h-12zM180 360h12v12h-12zM288 360h12v12h-12zM444 360h12v12h-12zM468 360h12v12h-12zM576 360h12v12h-12zM648 360h12v12h-12zM696 360h12v12h-12zM720 360h12v12h-12zM756 360h12v12h-12zM180 372h12v12h-12zM252 372h12v12h-12zM288 372h12v12h-12zM540 372h12v12h-12zM552 372h12v12h-12zM624 372h12v12h-12zM84 384h12v12h-12zM576 384h12v12h-12zM588 384h12v12h-12zM720 384h12v12h-12zM504 396h12v12h-12zM588 396h12v12h-12zM696 396h12v12h-12zM444 408h12v12h-12zM624 408h12v12h-12zM288 420h12v12h-12zM528 420h12v12h-12zM684 420h12v12h-12zM348 432h12v12h-12zM360 432h12v12h-12zM720 432h12v12h-12zM204 444h12v12h-12zM240 444h12v12h-12zM60 456h12v12h-12zM96 456h12v12h-12zM276 456h12v12h-12zM432 456h12v12h-12zM240 468h12v12h-12zM456 468h12v12h-12zM564 468h12v12h-12zM672 468h12v12h-12zM684 468h12v12h-12zM744 468h12v12h-12z"/><path fill="#55bff2" d="M48 0h12v12h-12zM600 0h12v12h-12zM624 0h12v12h-12zM660 0h12v12h-12zM684 0h12v12h-12zM216 12h12v12h-12zM504 12h12v12h-12zM744 12h12v12h-12zM60 24h12v12h-12zM216 24h12v12h-12zM324 24h12v12h-12zM564 24h12v12h-12zM612 24h12v12h-12zM624 24h12v12h-12zM756 24h12v12h-12zM108 36h12v12h-12zM168 36h12v12h-12zM180 36h12v12h-12zM240 36h12v12h-12zM252 36h12v12h-12zM408 36h12v12h-12zM468 36h12v12h-12zM12 48h12v12h-12zM108 48h12v12h-12zM468 48h12v12h-12zM708 48h12v12h-12zM732 48h12v12h-12zM0 60h12v12h-12zM36 60h12v12h-12zM72 60h12v12h-12zM144 60h12v12h-12zM192 60h12v12h-12zM240 60h12v12h-12zM300 60h12v12h-12zM636 60h12v12h-12zM120 72h12v12h-12zM240 72h12v12h-12zM324 72h12v12h-12zM492 72h12v12h-12zM540 72h12v12h-12zM552 72h12v12h-12zM120 84h12v12h-12zM156 84h12v12h-12zM192 84h12v12h-12zM600 84h12v12h-12zM648 84h12v12h-12zM744 84h12v12h-12zM72 96h12v12h-12zM84 96h12v12h-12zM96 96h12v12h-12zM156 96h12v12h-12zM336 96h12v12h-12zM456 96h12v12h-12zM540 96h12v12h-12zM696 96h12v12h-12zM300 108h12v12h-12zM324 108h12v12h-12zM576 108h12v12h-12zM732 108h12v12h-12zM744 108h12v12h-12zM12 120h12v12h-12zM36 120h12v12h-12zM204 120h12v12h-12zM288 120h12v12h-12zM468 120h12v12h-12zM492 120h12v12h-12zM684 120h12v12h-12zM708 120h12v12h-12zM180 132h12v12h-12zM564 132h12v12h-12zM600 132h12v12h-12zM648 132h12v12h-12zM72 144h12v12h-12zM84 144h12v12h-12zM132 144h12v12h-12zM300 144h12v12h-12zM372 144h12v12h-12zM384 144h12v12h-12zM420 144h12v12h-12zM444 144h12v12h-12zM468 144h12v12h-12zM492 144h12v12h-12zM624 144h12v12h-12zM192 156h12v12h-12zM204 156h12v12h-12zM648 156h12v12h-12zM660 156h12v12h-12zM48 168h12v12h-12zM60 168h12v12h-12zM96 168h12v12h-12zM228 168h12v12h-12zM696 168h12v12h-12zM60 180h12v12h-12zM384 180h12v12h-12zM48 192h12v12h-12zM312 192h12v12h-12zM348 192h12v12h-12zM396 192h12v12h-12zM600 192h12v12h-12zM612 192h12v12h-12zM732 192h12v12h-12zM144 204h12v12h-12zM360 204h12v12h-12zM636 204h12v12h-12zM504 216h12v12h-12zM228 228h12v12h-12zM348 228h12v12h-12zM0 240h12v12h-12zM180 240h12v12h-12zM552 240h12v12h-12zM564 240h12v12h-12zM648 240h12v12h-12zM24 252h12v12h-12zM108 252h12v12h-12zM240 252h12v12h-12zM288 252h12v12h-12zM336 252h12v12h-12zM420 252h12v12h-12zM612 252h12v12h-12zM696 252h12v12h-12zM744 252h12v12h-12zM24 264h12v12h-12zM240 264h12v12h-12zM312 264h12v12h-12zM0 276h12v12h-12zM72 276h12v12h-12zM240 276h12v12h-12zM264 276h12v12h-12zM456 276h12v12h-12zM672 276h12v12h-12zM696 276h12v12h-12zM108 288h12v12h-12zM192 288h12v12h-12zM240 288h12v12h-12zM312 288h12v12h-12zM24 300h12v12h-12zM300 300h12v12h-12zM324 300h12v12h-12zM384 300h12v12h-12zM492 300h12v12h-12zM684 300h12v12h-12zM744 300h12v12h-12zM72 312h12v12h-12zM480 312h12v12h-12zM576 312h12v12h-12zM600 312h12v12h-12zM636 312h12v12h-12zM744 312h12v12h-12zM108 324h12v12h-12zM492 324h12v12h-12zM156 336h12v12h-12zM684 336h12v12h-12zM0 348h12v12h-12zM48 348h12v12h-12zM132 348h12v12h-12zM276 348h12v12h-12zM72 360h12v12h-12zM108 360h12v12h-12zM408 360h12v12h-12zM420 360h12v12h-12zM432 360h12v12h-12zM504 360h12v12h-12zM624 360h12v12h-12zM108 372h12v12h-12zM396 372h12v12h-12zM528 372h12v12h-12zM588 372h12v12h-12zM600 372h12v12h-12zM612 372h12v12h-12zM180 384h12v12h-12zM228 384h12v12h-12zM504 384h12v12h-12zM564 384h12v12h-12zM744 384h12v12h-12zM240 396h12v12h-12zM420 396h12v12h-12zM444 396h12v12h-12zM468 396h12v12h-12zM492 396h12v12h-12zM72 408h12v12h-12zM144 408h12v12h-12zM264 408h12v12h-12zM84 420h12v12h-12zM96 420h12v12h-12zM120 420h12v12h-12zM396 420h12v12h-12zM408 420h12v12h-12zM468 420h12v12h-12zM492 420h12v12h-12zM564 420h12v12h-12zM252 432h12v12h-12zM264 432h12v12h-12zM480 432h12v12h-12zM600 432h12v12h-12zM96 444h12v12h-12zM480 444h12v12h-12zM492 444h12v12h-12zM540 444h12v12h-12zM552 444h12v12h-12zM636 444h12v12h-12zM0 456h12v12h-12zM24 456h12v12h-12zM168 456h12v12h-12zM240 456h12v12h-12zM264 456h12v12h-12zM504 456h12v12h-12zM564 456h12v12h-12zM744 456h12v12h-12zM0 468h12v12h-12zM72 468h12v12h-12zM84 468h12v12h-12zM276 468h12v12h-12zM384 468h12v12h-12z"/><path fill="#6ef2e4" d="M60 0h12v12h-12zM156 0h12v12h-12zM192 0h12v12h-12zM528 0h12v12h-12zM540 0h12v12h-12zM552 0h12v12h-12zM108 12h12v12h-12zM120 12h12v12h-12zM408 12h12v12h-12zM420 12h12v12h-12zM492 12h12v12h-12zM204 24h12v12h-12zM276 24h12v12h-12zM396 24h12v12h-12zM552 24h12v12h-12zM576 24h12v12h-12zM684 24h12v12h-12zM732 24h12v12h-12zM744 24h12v12h-12zM84 36h12v12h-12zM132 36h12v12h-12zM288 36h12v12h-12zM504 36h12v12h-12zM600 36h12v12h-12zM708 36h12v12h-12zM744 36h12v12h-12zM36 48h12v12h-12zM288 48h12v12h-12zM372 48h12v12h-12zM408 48h12v12h-12zM444 48h12v12h-12zM504 48h12v12h-12zM132 60h12v12h-12zM276 60h12v12h-12zM372 60h12v12h-12zM396 60h12v12h-12zM480 60h12v12h-12zM660 60h12v12h-12zM672 60h12v12h-12zM720 60h12v12h-12zM60 72h12v12h-12zM84 72h12v12h-12zM96 72h12v12h-12zM168 72h12v12h-12zM300 72h12v12h-12zM348 72h12v12h-12zM420 72h12v12h-12zM684 72h12v12h-12zM708 72h12v12h-12zM36 84h12v12h-12zM60 84h12v12h-12zM96 84h12v12h-12zM264 84h12v12h-12zM396 84h12v12h-12zM408 84h12v12h-12zM720 84h12v12h-12zM564 96h12v12h-12zM744 96h12v12h-12zM0 108h12v12h-12zM216 108h12v12h-12zM720 108h12v12h-12zM120 120h12v12h-12zM336 120h12v12h-12zM612 120h12v12h-12zM660 120h12v12h-12zM144 132h12v12h-12zM312 132h12v12h-12zM444 132h12v12h-12zM576 132h12v12h-12zM660 132h12v12h-12zM156 144h12v12h-12zM180 144h12v12h-12zM312 144h12v12h-12zM600 144h12v12h-12zM756 144h12v12h-12zM60 156h12v12h-12zM324 156h12v12h-12zM456 156h12v12h-12zM480 156h12v12h-12zM540 156h12v12h-12zM204 168h12v12h-12zM324 168h12v12h-12zM336 168h12v12h-12zM360 168h12v12h-12zM396 168h12v12h-12zM444 168h12v12h-12zM516 168h12v12h-12zM564 168h12v12h-12zM444 180h12v12h-12zM576 180h12v12h-12zM708 180h12v12h-12zM228 192h12v12h-12zM444 192h12v12h-12zM48 204h12v12h-12zM156 204h12v12h-12zM228 204h12v12h-12zM240 204h12v12h-12zM408 204h12v12h-12zM480 204h12v12h-12zM48 216h12v12h-12zM180 216h12v12h-12zM564 216h12v12h-12zM156 228h12v12h-12zM204 228h12v12h-12zM384 228h12v12h-12zM624 228h12v12h-12zM240 240h12v12h-12zM324 240h12v12h-12zM348 240h12v12h-12zM396 240h12v12h-12zM156 252h12v12h-12zM168 252h12v12h-12zM180 252h12v12h-12zM264 252h12v12h-12zM396 252h12v12h-12zM12 264h12v12h-12zM84 264h12v12h-12zM432 264h12v12h-12zM120 276h12v12h-12zM516 276h12v12h-12zM744 276h12v12h-12zM132 288h12v12h-12zM264 288h12v12h-12zM504 288h12v12h-12zM264 300h12v12h-12zM348 300h12v12h-12zM396 300h12v12h-12zM408 300h12v12h-12zM552 300h12v12h-12zM300 312h12v12h-12zM312 312h12v12h-12zM360 312h12v12h-12zM432 312h12v12h-12zM492 312h12v12h-12zM528 312h12v12h-12zM552 312h12v12h-12zM612 312h12v12h-12zM12 324h12v12h-12zM276 324h12v12h-12zM312 324h12v12h-12zM324 324h12v12h-12zM336 324h12v12h-12zM444 324h12v12h-12zM564 324h12v12h-12zM648 324h12v12h-12zM672 324h12v12h-12zM132 336h12v12h-12zM144 336h12v12h-12zM216 336h12v12h-12zM528 336h12v12h-12zM564 336h12v12h-12zM648 336h12v12h-12zM192 348h12v12h-12zM360 348h12v12h-12zM480 348h12v12h-12zM516 348h12v12h-12zM528 348h12v12h-12zM600 348h12v12h-12zM12 360h12v12h-12zM156 360h12v12h-12zM168 360h12v12h-12zM216 360h12v12h-12zM264 360h12v12h-12zM300 360h12v12h-12zM384 360h12v12h-12zM396 360h12v12h-12zM684 360h12v12h-12zM168 372h12v12h-12zM348 372h12v12h-12zM636 372h12v12h-12zM648 372h12v12h-12zM660 372h12v12h-12zM36 384h12v12h-12zM120 384h12v12h-12zM192 384h12v12h-12zM204 384h12v12h-12zM216 384h12v12h-12zM264 384h12v12h-12zM408 384h12v12h-12zM456 384h12v12h-12zM480 384h12v12h-12zM492 384h12v12h-12zM612 384h12v12h-12zM732 384h12v12h-12zM84 396h12v12h-12zM204 396h12v12h-12zM312 396h12v12h-12zM516 396h12v12h-12zM552 396h12v12h-12zM600 396h12v12h-12zM732 396h12v12h-12zM84 408h12v12h-12zM204 408h12v12h-12zM300 408h12v12h-12zM420 408h12v12h-12zM516 408h12v12h-12zM708 408h12v12h-12zM204 420h12v12h-12zM240 420h12v12h-12zM648 420h12v12h-12zM672 420h12v12h-12zM720 420h12v12h-12zM756 420h12v12h-12zM144 432h12v12h-12zM192 432h12v12h-12zM12 444h12v12h-12zM48 444h12v12h-12zM144 444h12v12h-12zM180 444h12v12h-12zM384 444h12v12h-12zM396 444h12v12h-12zM444 444h12v12h-12zM504 444h12v12h-12zM408 456h12v12h-12zM516 456h12v12h-12zM528 456h12v12h-12zM552 456h12v12h-12zM588 456h12v12h-12zM60 468h12v12h-12zM300 468h12v12h-12zM324 468h12v12h-12zM444 468h12v12h-12zM492 468h12v12h-12z"/><path fill="#7afef0" d="M84 0h12v12h-12zM132 0h12v12h-12zM180 0h12v12h-12zM240 0h12v12h-12zM708 0h12v12h-12zM84 12h12v12h-12zM336 12h12v12h-12zM360 12h12v12h-12zM432 12h12v12h-12zM612 12h12v12h-12zM708 12h12v12h-12zM756 12h12v12h-12zM0 24h12v12h-12zM348 24h12v12h-12zM648 24h12v12h-12zM708 24h12v12h-12zM300 36h12v12h-12zM432 36h12v12h-12zM444 36h12v12h-12zM576 36h12v12h-12zM192 48h12v12h-12zM696 48h12v12h-12zM228 60h12v12h-12zM312 60h12v12h-12zM384 60h12v12h-12zM540 60h12v12h-12zM24 72h12v12h-12zM36 72h12v12h-12zM336 72h12v12h-12zM384 72h12v12h-12zM48 84h12v12h-12zM288 84h12v12h-12zM300 84h12v12h-12zM360 84h12v12h-12zM492 84h12v12h-12zM684 84h12v12h-12zM36 96h12v12h-12zM216 96h12v12h-12zM240 96h12v12h-12zM444 96h12v12h-12zM528 96h12v12h-12zM576 96h12v12h-12zM636 96h12v12h-12zM144 108h12v12h-12zM228 108h12v12h-12zM264 108h12v12h-12zM336 108h12v12h-12zM480 108h12v12h-12zM564 108h12v12h-12zM216 120h12v12h-12zM348 120h12v12h-12zM216 132h12v12h-12zM276 132h12v12h-12zM408 132h12v12h-12zM516 132h12v12h-12zM672 132h12v12h-12zM732 132h12v12h-12zM48 144h12v12h-12zM612 144h12v12h-12zM672 144h12v12h-12zM684 144h12v12h-12zM708 144h12v12h-12zM300 156h12v12h-12zM588 156h12v12h-12zM708 156h12v12h-12zM312 168h12v12h-12zM348 168h12v12h-12zM372 168h12v12h-12zM408 168h12v12h-12zM504 168h12v12h-12zM744 168h12v12h-12zM192 180h12v12h-12zM276 180h12v12h-12zM300 180h12v12h-12zM336 180h12v12h-12zM432 180h12v12h-12zM540 180h12v12h-12zM624 180h12v12h-12zM36 192h12v12h-12zM240 192h12v12h-12zM264 192h12v12h-12zM288 192h12v12h-12zM468 192h12v12h-12zM480 192h12v12h-12zM636 192h12v12h-12zM72 204h12v12h-12zM108 204h12v12h-12zM120 204h12v12h-12zM396 204h12v12h-12zM420 204h12v12h-12zM660 204h12v12h-12zM24 216h12v12h-12zM60 216h12v12h-12zM72 216h12v12h-12zM312 216h12v12h-12zM372 216h12v12h-12zM708 216h12v12h-12zM720 216h12v12h-12zM120 228h12v12h-12zM168 228h12v12h-12zM180 228h12v12h-12zM324 228h12v12h-12zM336 228h12v12h-12zM360 228h12v12h-12zM528 228h12v12h-12zM720 228h12v12h-12zM732 228h12v12h-12zM216 240h12v12h-12zM336 240h12v12h-12zM420 240h12v12h-12zM456 240h12v12h-12zM480 240h12v12h-12zM624 240h12v12h-12zM660 240h12v12h-12zM120 252h12v12h-12zM192 252h12v12h-12zM456 252h12v12h-12zM252 264h12v12h-12zM456 264h12v12h-12zM36 276h12v12h-12zM96 276h12v12h-12zM108 276h12v12h-12zM132 276h12v12h-12zM228 276h12v12h-12zM360 276h12v12h-12zM636 276h12v12h-12zM12 288h12v12h-12zM216 288h12v12h-12zM276 288h12v12h-12zM336 288h12v12h-12zM348 288h12v12h-12zM648 288h12v12h-12zM672 288h12v12h-12zM204 300h12v12h-12zM252 300h12v12h-12zM624 300h12v12h-12zM12 312h12v12h-12zM48 312h12v12h-12zM144 312h12v12h-12zM156 312h12v12h-12zM240 312h12v12h-12zM504 312h12v12h-12zM684 312h12v12h-12zM732 312h12v12h-12zM84 324h12v12h-12zM192 324h12v12h-12zM624 324h12v12h-12zM744 324h12v12h-12zM204 336h12v12h-12zM300 336h12v12h-12zM324 336h12v12h-12zM372 336h12v12h-12zM384 336h12v12h-12zM420 336h12v12h-12zM516 336h12v12h-12zM600 336h12v12h-12zM636 336h12v12h-12zM204 348h12v12h-12zM240 348h12v12h-12zM252 348h12v12h-12zM264 348h12v12h-12zM336 348h12v12h-12zM372 348h12v12h-12zM456 348h12v12h-12zM588 348h12v12h-12zM660 348h12v12h-12zM696 348h12v12h-12zM756 348h12v12h-12zM492 360h12v12h-12zM516 360h12v12h-12zM564 360h12v12h-12zM480 372h12v12h-12zM516 372h12v12h-12zM168 384h12v12h-12zM312 384h12v12h-12zM360 384h12v12h-12zM372 384h12v12h-12zM696 384h12v12h-12zM48 396h12v12h-12zM60 396h12v12h-12zM120 396h12v12h-12zM168 396h12v12h-12zM372 396h12v12h-12zM540 396h12v12h-12zM708 396h12v12h-12zM756 396h12v12h-12zM60 408h12v12h-12zM180 408h12v12h-12zM276 408h12v12h-12zM312 408h12v12h-12zM324 408h12v12h-12zM348 408h12v12h-12zM384 408h12v12h-12zM504 408h12v12h-12zM60 420h12v12h-12zM132 420h12v12h-12zM144 420h12v12h-12zM312 420h12v12h-12zM348 420h12v12h-12zM600 420h12v12h-12zM36 432h12v12h-12zM396 432h12v12h-12zM420 432h12v12h-12zM552 432h12v12h-12zM0 444h12v12h-12zM12 456h12v12h-12zM36 456h12v12h-12zM180 456h12v12h-12zM384 456h12v12h-12zM540 456h12v12h-12zM732 456h12v12h-12zM288 468h12v12h-12zM516 468h12v12h-12zM576 468h12v12h-12zM756 468h12v12h-12z"/><path fill="#4fb9ec" d="M108 0h12v12h-12zM120 0h12v12h-12zM360 0h12v12h-12zM636 0h12v12h-12zM648 0h12v12h-12zM672 0h12v12h-12zM696 0h12v12h-12zM732 0h12v12h-12zM756 0h12v12h-12zM24 12h12v12h-12zM372 12h12v12h-12zM516 12h12v12h-12zM576 12h12v12h-12zM588 12h12v12h-12zM600 12h12v12h-12zM660 12h12v12h-12zM84 24h12v12h-12zM96 24h12v12h-12zM108 24h12v12h-12zM264 24h12v12h-12zM336 24h12v12h-12zM420 24h12v12h-12zM588 24h12v12h-12zM600 24h12v12h-12zM552 36h12v12h-12zM72 48h12v12h-12zM132 48h12v12h-12zM180 48h12v12h-12zM228 48h12v12h-12zM252 48h12v12h-12zM384 48h12v12h-12zM480 48h12v12h-12zM528 48h12v12h-12zM720 48h12v12h-12zM24 60h12v12h-12zM168 60h12v12h-12zM180 60h12v12h-12zM336 60h12v12h-12zM348 60h12v12h-12zM420 60h12v12h-12zM456 60h12v12h-12zM252 72h12v12h-12zM276 72h12v12h-12zM312 72h12v12h-12zM624 72h12v12h-12zM636 72h12v12h-12zM756 72h12v12h-12zM72 84h12v12h-12zM204 84h12v12h-12zM276 84h12v12h-12zM348 84h12v12h-12zM432 84h12v12h-12zM468 84h12v12h-12zM516 84h12v12h-12zM528 84h12v12h-12zM732 84h12v12h-12zM288 96h12v12h-12zM300 96h12v12h-12zM552 96h12v12h-12zM684 96h12v12h-12zM168 108h12v12h-12zM360 108h12v12h-12zM420 108h12v12h-12zM600 108h12v12h-12zM696 108h12v12h-12zM48 120h12v12h-12zM108 120h12v12h-12zM156 120h12v12h-12zM168 120h12v12h-12zM264 120h12v12h-12zM408 120h12v12h-12zM624 120h12v12h-12zM696 120h12v12h-12zM720 120h12v12h-12zM300 132h12v12h-12zM492 132h12v12h-12zM624 132h12v12h-12zM696 132h12v12h-12zM720 132h12v12h-12zM744 132h12v12h-12zM168 144h12v12h-12zM192 144h12v12h-12zM456 144h12v12h-12zM480 144h12v12h-12zM564 144h12v12h-12zM648 144h12v12h-12zM72 156h12v12h-12zM516 156h12v12h-12zM684 156h12v12h-12zM720 156h12v12h-12zM108 168h12v12h-12zM120 168h12v12h-12zM168 168h12v12h-12zM264 168h12v12h-12zM540 168h12v12h-12zM576 168h12v12h-12zM672 168h12v12h-12zM708 168h12v12h-12zM48 180h12v12h-12zM204 180h12v12h-12zM408 180h12v12h-12zM696 180h12v12h-12zM120 192h12v12h-12zM168 192h12v12h-12zM384 192h12v12h-12zM684 192h12v12h-12zM756 192h12v12h-12zM132 204h12v12h-12zM384 204h12v12h-12zM432 204h12v12h-12zM444 204h12v12h-12zM456 204h12v12h-12zM504 204h12v12h-12zM0 216h12v12h-12zM12 216h12v12h-12zM348 216h12v12h-12zM360 216h12v12h-12zM384 216h12v12h-12zM432 216h12v12h-12zM600 216h12v12h-12zM756 216h12v12h-12zM588 228h12v12h-12zM708 228h12v12h-12zM24 240h12v12h-12zM120 240h12v12h-12zM252 240h12v12h-12zM360 240h12v12h-12zM492 240h12v12h-12zM576 240h12v12h-12zM600 240h12v12h-12zM732 240h12v12h-12zM204 252h12v12h-12zM252 252h12v12h-12zM276 252h12v12h-12zM300 252h12v12h-12zM564 252h12v12h-12zM648 252h12v12h-12zM96 264h12v12h-12zM108 264h12v12h-12zM444 264h12v12h-12zM84 276h12v12h-12zM312 276h12v12h-12zM384 276h12v12h-12zM600 276h12v12h-12zM708 276h12v12h-12zM96 288h12v12h-12zM288 288h12v12h-12zM300 288h12v12h-12zM324 288h12v12h-12zM396 288h12v12h-12zM564 288h12v12h-12zM576 288h12v12h-12zM684 288h12v12h-12zM756 288h12v12h-12zM432 300h12v12h-12zM444 300h12v12h-12zM480 300h12v12h-12zM516 300h12v12h-12zM576 300h12v12h-12zM600 300h12v12h-12zM732 300h12v12h-12zM108 312h12v12h-12zM444 312h12v12h-12zM516 312h12v12h-12zM588 312h12v12h-12zM240 324h12v12h-12zM264 324h12v12h-12zM288 324h12v12h-12zM456 324h12v12h-12zM480 324h12v12h-12zM552 324h12v12h-12zM600 324h12v12h-12zM612 324h12v12h-12zM108 336h12v12h-12zM192 336h12v12h-12zM492 336h12v12h-12zM672 336h12v12h-12zM108 348h12v12h-12zM228 348h12v12h-12zM432 348h12v12h-12zM144 360h12v12h-12zM192 360h12v12h-12zM204 360h12v12h-12zM276 360h12v12h-12zM312 360h12v12h-12zM636 360h12v12h-12zM672 360h12v12h-12zM120 372h12v12h-12zM132 372h12v12h-12zM204 372h12v12h-12zM228 372h12v12h-12zM408 372h12v12h-12zM564 372h12v12h-12zM744 372h12v12h-12zM108 384h12v12h-12zM420 384h12v12h-12zM600 384h12v12h-12zM708 384h12v12h-12zM360 408h12v12h-12zM432 408h12v12h-12zM468 408h12v12h-12zM480 408h12v12h-12zM552 408h12v12h-12zM564 408h12v12h-12zM228 420h12v12h-12zM372 420h12v12h-12zM384 420h12v12h-12zM456 420h12v12h-12zM480 420h12v12h-12zM612 420h12v12h-12zM240 432h12v12h-12zM300 432h12v12h-12zM312 432h12v12h-12zM384 432h12v12h-12zM456 432h12v12h-12zM564 432h12v12h-12zM612 432h12v12h-12zM708 432h12v12h-12zM168 444h12v12h-12zM192 444h12v12h-12zM264 444h12v12h-12zM456 444h12v12h-12zM468 444h12v12h-12zM684 444h12v12h-12zM72 456h12v12h-12zM84 456h12v12h-12zM144 456h12v12h-12zM216 456h12v12h-12zM324 456h12v12h-12zM492 456h12v12h-12zM576 456h12v12h-12zM648 456h12v12h-12zM684 456h12v12h-12zM132 468h12v12h-12zM588 468h12v12h-12z"/><path fill="#96b3e6" d="M204 0h12v12h-12zM348 0h12v12h-12zM372 0h12v12h-12zM480 0h12v12h-12zM12 12h12v12h-12zM276 12h12v12h-12zM324 12h12v12h-12zM348 12h12v12h-12zM456 12h12v12h-12zM468 12h12v12h-12zM480 12h12v12h-12zM624 12h12v12h-12zM372 24h12v12h-12zM384 24h12v12h-12zM468 24h12v12h-12zM696 24h12v12h-12zM516 36h12v12h-12zM540 36h12v12h-12zM672 36h12v12h-12zM684 36h12v12h-12zM96 48h12v12h-12zM216 48h12v12h-12zM516 48h12v12h-12zM492 60h12v12h-12zM516 60h12v12h-12zM12 72h12v12h-12zM192 72h12v12h-12zM288 72h12v12h-12zM480 72h12v12h-12zM504 72h12v12h-12zM612 72h12v12h-12zM12 84h12v12h-12zM108 84h12v12h-12zM240 84h12v12h-12zM48 96h12v12h-12zM372 96h12v12h-12zM420 96h12v12h-12zM588 96h12v12h-12zM600 96h12v12h-12zM624 96h12v12h-12zM96 108h12v12h-12zM132 108h12v12h-12zM372 108h12v12h-12zM396 108h12v12h-12zM408 108h12v12h-12zM456 108h12v12h-12zM492 108h12v12h-12zM612 108h12v12h-12zM648 108h12v12h-12zM672 108h12v12h-12zM60 120h12v12h-12zM84 120h12v12h-12zM144 120h12v12h-12zM192 120h12v12h-12zM444 120h12v12h-12zM228 132h12v12h-12zM288 132h12v12h-12zM756 132h12v12h-12zM36 144h12v12h-12zM96 144h12v12h-12zM228 144h12v12h-12zM360 144h12v12h-12zM504 144h12v12h-12zM528 144h12v12h-12zM660 144h12v12h-12zM696 144h12v12h-12zM0 156h12v12h-12zM276 156h12v12h-12zM408 156h12v12h-12zM468 156h12v12h-12zM564 156h12v12h-12zM612 156h12v12h-12zM696 156h12v12h-12zM0 168h12v12h-12zM420 168h12v12h-12zM600 168h12v12h-12zM756 168h12v12h-12zM0 180h12v12h-12zM84 180h12v12h-12zM132 180h12v12h-12zM144 180h12v12h-12zM420 180h12v12h-12zM96 192h12v12h-12zM180 192h12v12h-12zM192 192h12v12h-12zM360 192h12v12h-12zM672 192h12v12h-12zM216 204h12v12h-12zM324 204h12v12h-12zM348 204h12v12h-12zM564 204h12v12h-12zM708 204h12v12h-12zM168 216h12v12h-12zM216 216h12v12h-12zM456 216h12v12h-12zM612 216h12v12h-12zM660 216h12v12h-12zM24 228h12v12h-12zM36 228h12v12h-12zM48 228h12v12h-12zM60 228h12v12h-12zM96 228h12v12h-12zM300 228h12v12h-12zM312 228h12v12h-12zM408 228h12v12h-12zM504 228h12v12h-12zM756 228h12v12h-12zM72 240h12v12h-12zM228 240h12v12h-12zM288 240h12v12h-12zM756 240h12v12h-12zM0 252h12v12h-12zM12 252h12v12h-12zM324 252h12v12h-12zM588 252h12v12h-12zM600 252h12v12h-12zM624 252h12v12h-12zM720 252h12v12h-12zM192 264h12v12h-12zM324 264h12v12h-12zM384 264h12v12h-12zM564 264h12v12h-12zM576 264h12v12h-12zM612 264h12v12h-12zM732 264h12v12h-12zM48 276h12v12h-12zM180 276h12v12h-12zM276 276h12v12h-12zM300 276h12v12h-12zM24 288h12v12h-12zM60 288h12v12h-12zM228 288h12v12h-12zM660 288h12v12h-12zM0 300h12v12h-12zM180 300h12v12h-12zM84 312h12v12h-12zM192 312h12v12h-12zM252 312h12v12h-12zM348 312h12v12h-12zM252 324h12v12h-12zM540 324h12v12h-12zM588 324h12v12h-12zM636 324h12v12h-12zM60 336h12v12h-12zM84 336h12v12h-12zM96 336h12v12h-12zM264 336h12v12h-12zM180 348h12v12h-12zM288 348h12v12h-12zM408 348h12v12h-12zM576 348h12v12h-12zM648 348h12v12h-12zM240 360h12v12h-12zM456 360h12v12h-12zM708 360h12v12h-12zM12 372h12v12h-12zM144 372h12v12h-12zM240 372h12v12h-12zM684 372h12v12h-12zM696 372h12v12h-12zM756 372h12v12h-12zM96 384h12v12h-12zM144 384h12v12h-12zM528 384h12v12h-12zM0 396h12v12h-12zM24 396h12v12h-12zM132 396h12v12h-12zM144 396h12v12h-12zM216 396h12v12h-12zM264 396h12v12h-12zM456 396h12v12h-12zM720 396h12v12h-12zM288 408h12v12h-12zM648 408h12v12h-12zM48 420h12v12h-12zM504 420h12v12h-12zM540 420h12v12h-12zM636 420h12v12h-12zM168 432h12v12h-12zM672 432h12v12h-12zM156 444h12v12h-12zM216 444h12v12h-12zM348 444h12v12h-12zM588 444h12v12h-12zM660 444h12v12h-12zM672 444h12v12h-12zM756 444h12v12h-12zM288 456h12v12h-12zM480 456h12v12h-12zM600 456h12v12h-12zM612 456h12v12h-12zM48 468h12v12h-12zM168 468h12v12h-12zM216 468h12v12h-12zM228 468h12v12h-12zM348 468h12v12h-12zM360 468h12v12h-12zM372 468h12v12h-12zM504 468h12v12h-12zM528 468h12v12h-12zM600 468h12v12h-12zM696 468h12v12h-12z"/><path fill="#c2eaf8" d="M216 0h12v12h-12zM336 0h12v12h-12zM168 12h12v12h-12zM180 12h12v12h-12zM252 12h12v12h-12zM24 24h12v12h-12zM36 24h12v12h-12zM132 24h12v12h-12zM300 24h12v12h-12zM444 24h12v12h-12zM516 24h12v12h-12zM540 24h12v12h-12zM144 36h12v12h-12zM216 36h12v12h-12zM528 36h12v12h-12zM612 36h12v12h-12zM624 36h12v12h-12zM636 36h12v12h-12zM696 36h12v12h-12zM312 48h12v12h-12zM420 48h12v12h-12zM600 48h12v12h-12zM636 48h12v12h-12zM756 48h12v12h-12zM12 60h12v12h-12zM252 60h12v12h-12zM444 60h12v12h-12zM588 60h12v12h-12zM648 60h12v12h-12zM156 72h12v12h-12zM372 72h12v12h-12zM516 72h12v12h-12zM564 72h12v12h-12zM744 72h12v12h-12zM252 84h12v12h-12zM588 84h12v12h-12zM624 84h12v12h-12zM672 84h12v12h-12zM108 96h12v12h-12zM204 96h12v12h-12zM384 96h12v12h-12zM396 96h12v12h-12zM672 96h12v12h-12zM48 108h12v12h-12zM72 108h12v12h-12zM84 108h12v12h-12zM384 108h12v12h-12zM528 108h12v12h-12zM0 120h12v12h-12zM312 120h12v12h-12zM384 120h12v12h-12zM636 120h12v12h-12zM648 120h12v12h-12zM756 120h12v12h-12zM0 132h12v12h-12zM96 132h12v12h-12zM432 132h12v12h-12zM456 132h12v12h-12zM468 132h12v12h-12zM480 132h12v12h-12zM0 144h12v12h-12zM408 144h12v12h-12zM720 144h12v12h-12zM84 156h12v12h-12zM264 156h12v12h-12zM336 156h12v12h-12zM156 168h12v12h-12zM624 168h12v12h-12zM636 168h12v12h-12zM108 180h12v12h-12zM564 180h12v12h-12zM612 180h12v12h-12zM648 192h12v12h-12zM660 192h12v12h-12zM24 204h12v12h-12zM96 204h12v12h-12zM168 204h12v12h-12zM540 204h12v12h-12zM96 216h12v12h-12zM132 228h12v12h-12zM192 228h12v12h-12zM252 228h12v12h-12zM264 228h12v12h-12zM276 228h12v12h-12zM288 228h12v12h-12zM372 228h12v12h-12zM420 228h12v12h-12zM516 228h12v12h-12zM564 228h12v12h-12zM48 240h12v12h-12zM108 240h12v12h-12zM132 240h12v12h-12zM708 240h12v12h-12zM132 252h12v12h-12zM144 252h12v12h-12zM636 252h12v12h-12zM708 252h12v12h-12zM732 252h12v12h-12zM168 264h12v12h-12zM180 264h12v12h-12zM396 264h12v12h-12zM540 264h12v12h-12zM660 264h12v12h-12zM684 264h12v12h-12zM696 264h12v12h-12zM12 276h12v12h-12zM24 276h12v12h-12zM648 276h12v12h-12zM732 276h12v12h-12zM0 288h12v12h-12zM144 288h12v12h-12zM588 288h12v12h-12zM12 300h12v12h-12zM48 300h12v12h-12zM96 300h12v12h-12zM216 300h12v12h-12zM336 300h12v12h-12zM540 300h12v12h-12zM564 300h12v12h-12zM60 312h12v12h-12zM96 312h12v12h-12zM132 312h12v12h-12zM228 312h12v12h-12zM276 312h12v12h-12zM408 312h12v12h-12zM48 324h12v12h-12zM96 324h12v12h-12zM360 324h12v12h-12zM372 324h12v12h-12zM432 324h12v12h-12zM696 324h12v12h-12zM168 336h12v12h-12zM468 336h12v12h-12zM480 336h12v12h-12zM624 336h12v12h-12zM708 336h12v12h-12zM144 348h12v12h-12zM468 348h12v12h-12zM504 348h12v12h-12zM720 348h12v12h-12zM120 360h12v12h-12zM348 360h12v12h-12zM24 372h12v12h-12zM36 372h12v12h-12zM192 372h12v12h-12zM336 372h12v12h-12zM420 372h12v12h-12zM456 372h12v12h-12zM468 372h12v12h-12zM732 372h12v12h-12zM24 384h12v12h-12zM156 384h12v12h-12zM432 384h12v12h-12zM624 384h12v12h-12zM36 396h12v12h-12zM252 396h12v12h-12zM336 396h12v12h-12zM384 396h12v12h-12zM576 396h12v12h-12zM672 396h12v12h-12zM96 408h12v12h-12zM108 408h12v12h-12zM240 408h12v12h-12zM336 408h12v12h-12zM408 408h12v12h-12zM540 408h12v12h-12zM576 408h12v12h-12zM744 408h12v12h-12zM0 420h12v12h-12zM12 420h12v12h-12zM12 432h12v12h-12zM156 432h12v12h-12zM432 432h12v12h-12zM660 432h12v12h-12zM744 432h12v12h-12zM72 444h12v12h-12zM228 444h12v12h-12zM252 444h12v12h-12zM324 444h12v12h-12zM408 444h12v12h-12zM624 444h12v12h-12zM192 456h12v12h-12zM204 456h12v12h-12zM396 456h12v12h-12zM456 456h12v12h-12zM468 456h12v12h-12zM708 456h12v12h-12zM756 456h12v12h-12zM12 468h12v12h-12zM24 468h12v12h-12zM264 468h12v12h-12zM336 468h12v12h-12zM408 468h12v12h-12zM468 468h12v12h-12zM612 468h12v12h-12zM708 468h12v12h-12z"/><path fill="#90ade0" d="M228 0h12v12h-12zM264 0h12v12h-12zM396 0h12v12h-12zM456 0h12v12h-12zM612 0h12v12h-12zM744 0h12v12h-12zM156 12h12v12h-12zM288 12h12v12h-12zM12 24h12v12h-12zM660 24h12v12h-12zM24 36h12v12h-12zM60 36h12v12h-12zM96 36h12v12h-12zM204 36h12v12h-12zM276 36h12v12h-12zM348 36h12v12h-12zM372 36h12v12h-12zM564 36h12v12h-12zM756 36h12v12h-12zM60 48h12v12h-12zM120 48h12v12h-12zM264 48h12v12h-12zM336 48h12v12h-12zM360 48h12v12h-12zM564 48h12v12h-12zM48 60h12v12h-12zM60 60h12v12h-12zM108 60h12v12h-12zM216 60h12v12h-12zM564 60h12v12h-12zM0 72h12v12h-12zM228 72h12v12h-12zM336 84h12v12h-12zM636 84h12v12h-12zM324 96h12v12h-12zM348 96h12v12h-12zM360 96h12v12h-12zM504 96h12v12h-12zM516 96h12v12h-12zM612 96h12v12h-12zM12 108h12v12h-12zM516 108h12v12h-12zM540 108h12v12h-12zM624 108h12v12h-12zM72 120h12v12h-12zM240 120h12v12h-12zM324 120h12v12h-12zM360 120h12v12h-12zM372 120h12v12h-12zM516 120h12v12h-12zM528 120h12v12h-12zM552 120h12v12h-12zM576 120h12v12h-12zM60 132h12v12h-12zM204 132h12v12h-12zM240 132h12v12h-12zM360 132h12v12h-12zM708 132h12v12h-12zM24 144h12v12h-12zM108 144h12v12h-12zM144 144h12v12h-12zM264 144h12v12h-12zM36 156h12v12h-12zM96 156h12v12h-12zM168 156h12v12h-12zM240 156h12v12h-12zM288 156h12v12h-12zM372 156h12v12h-12zM384 156h12v12h-12zM420 156h12v12h-12zM492 156h12v12h-12zM576 156h12v12h-12zM84 168h12v12h-12zM252 168h12v12h-12zM588 168h12v12h-12zM360 180h12v12h-12zM372 180h12v12h-12zM492 180h12v12h-12zM672 180h12v12h-12zM732 180h12v12h-12zM144 192h12v12h-12zM204 192h12v12h-12zM216 192h12v12h-12zM432 192h12v12h-12zM708 192h12v12h-12zM720 192h12v12h-12zM0 204h12v12h-12zM192 204h12v12h-12zM204 204h12v12h-12zM252 204h12v12h-12zM336 204h12v12h-12zM588 204h12v12h-12zM648 204h12v12h-12zM156 216h12v12h-12zM408 216h12v12h-12zM480 216h12v12h-12zM588 216h12v12h-12zM672 216h12v12h-12zM684 216h12v12h-12zM696 216h12v12h-12zM84 228h12v12h-12zM456 228h12v12h-12zM480 228h12v12h-12zM492 228h12v12h-12zM576 228h12v12h-12zM600 228h12v12h-12zM612 228h12v12h-12zM684 228h12v12h-12zM84 240h12v12h-12zM96 240h12v12h-12zM204 240h12v12h-12zM408 240h12v12h-12zM528 240h12v12h-12zM612 240h12v12h-12zM60 252h12v12h-12zM96 252h12v12h-12zM228 252h12v12h-12zM348 252h12v12h-12zM672 252h12v12h-12zM684 252h12v12h-12zM0 264h12v12h-12zM60 264h12v12h-12zM72 264h12v12h-12zM288 264h12v12h-12zM480 264h12v12h-12zM516 264h12v12h-12zM528 264h12v12h-12zM552 264h12v12h-12zM588 264h12v12h-12zM600 264h12v12h-12zM744 264h12v12h-12zM144 276h12v12h-12zM156 276h12v12h-12zM288 276h12v12h-12zM720 276h12v12h-12zM120 288h12v12h-12zM360 288h12v12h-12zM372 288h12v12h-12zM492 288h12v12h-12zM720 288h12v12h-12zM360 300h12v12h-12zM672 300h12v12h-12zM708 300h12v12h-12zM36 312h12v12h-12zM336 312h12v12h-12zM384 312h12v12h-12zM540 312h12v12h-12zM624 312h12v12h-12zM468 324h12v12h-12zM48 336h12v12h-12zM72 336h12v12h-12zM240 336h12v12h-12zM276 336h12v12h-12zM288 336h12v12h-12zM312 336h12v12h-12zM552 336h12v12h-12zM732 336h12v12h-12zM492 348h12v12h-12zM552 348h12v12h-12zM564 348h12v12h-12zM684 348h12v12h-12zM732 348h12v12h-12zM24 360h12v12h-12zM228 360h12v12h-12zM360 360h12v12h-12zM528 360h12v12h-12zM612 360h12v12h-12zM156 372h12v12h-12zM276 372h12v12h-12zM300 372h12v12h-12zM360 372h12v12h-12zM240 384h12v12h-12zM252 384h12v12h-12zM516 384h12v12h-12zM108 396h12v12h-12zM156 396h12v12h-12zM348 396h12v12h-12zM612 396h12v12h-12zM636 396h12v12h-12zM684 396h12v12h-12zM192 408h12v12h-12zM672 408h12v12h-12zM168 420h12v12h-12zM216 420h12v12h-12zM552 420h12v12h-12zM696 420h12v12h-12zM60 432h12v12h-12zM72 432h12v12h-12zM108 432h12v12h-12zM132 432h12v12h-12zM216 432h12v12h-12zM324 432h12v12h-12zM372 432h12v12h-12zM468 432h12v12h-12zM636 432h12v12h-12zM36 444h12v12h-12zM360 444h12v12h-12zM432 444h12v12h-12zM528 444h12v12h-12zM696 444h12v12h-12zM708 444h12v12h-12zM744 444h12v12h-12zM108 456h12v12h-12zM156 456h12v12h-12zM660 456h12v12h-12zM672 456h12v12h-12zM696 456h12v12h-12zM36 468h12v12h-12zM96 468h12v12h-12zM120 468h12v12h-12zM156 468h12v12h-12zM252 468h12v12h-12zM540 468h12v12h-12z"/><path fill="#c8f0fe" d="M276 0h12v12h-12zM504 0h12v12h-12zM516 0h12v12h-12zM720 0h12v12h-12zM96 12h12v12h-12zM132 12h12v12h-12zM228 12h12v12h-12zM240 12h12v12h-12zM636 12h12v12h-12zM48 24h12v12h-12zM72 24h12v12h-12zM144 24h12v12h-12zM240 24h12v12h-12zM252 24h12v12h-12zM288 24h12v12h-12zM480 24h12v12h-12zM156 36h12v12h-12zM144 48h12v12h-12zM432 48h12v12h-12zM648 48h12v12h-12zM660 48h12v12h-12zM84 60h12v12h-12zM288 60h12v12h-12zM600 60h12v12h-12zM696 60h12v12h-12zM132 72h12v12h-12zM432 72h12v12h-12zM576 72h12v12h-12zM600 72h12v12h-12zM0 84h12v12h-12zM216 84h12v12h-12zM228 84h12v12h-12zM576 84h12v12h-12zM0 96h12v12h-12zM192 96h12v12h-12zM228 96h12v12h-12zM468 96h12v12h-12zM660 96h12v12h-12zM708 96h12v12h-12zM180 108h12v12h-12zM552 108h12v12h-12zM180 120h12v12h-12zM228 120h12v12h-12zM396 120h12v12h-12zM420 120h12v12h-12zM564 120h12v12h-12zM600 120h12v12h-12zM324 132h12v12h-12zM612 132h12v12h-12zM120 144h12v12h-12zM324 144h12v12h-12zM540 144h12v12h-12zM732 144h12v12h-12zM144 156h12v12h-12zM156 156h12v12h-12zM228 156h12v12h-12zM252 156h12v12h-12zM396 156h12v12h-12zM504 156h12v12h-12zM552 156h12v12h-12zM624 156h12v12h-12zM732 156h12v12h-12zM756 156h12v12h-12zM276 168h12v12h-12zM468 168h12v12h-12zM552 168h12v12h-12zM648 168h12v12h-12zM684 168h12v12h-12zM24 180h12v12h-12zM72 180h12v12h-12zM120 180h12v12h-12zM240 180h12v12h-12zM312 180h12v12h-12zM468 180h12v12h-12zM528 180h12v12h-12zM588 180h12v12h-12zM756 180h12v12h-12zM132 192h12v12h-12zM420 192h12v12h-12zM504 192h12v12h-12zM528 192h12v12h-12zM552 192h12v12h-12zM564 192h12v12h-12zM624 192h12v12h-12zM12 204h12v12h-12zM36 204h12v12h-12zM288 204h12v12h-12zM468 204h12v12h-12zM684 204h12v12h-12zM36 216h12v12h-12zM120 216h12v12h-12zM132 216h12v12h-12zM192 216h12v12h-12zM288 216h12v12h-12zM528 216h12v12h-12zM576 216h12v12h-12zM648 216h12v12h-12zM732 216h12v12h-12zM144 228h12v12h-12zM672 228h12v12h-12zM36 240h12v12h-12zM60 240h12v12h-12zM372 240h12v12h-12zM444 240h12v12h-12zM588 240h12v12h-12zM372 252h12v12h-12zM408 252h12v12h-12zM492 252h12v12h-12zM552 252h12v12h-12zM660 252h12v12h-12zM120 264h12v12h-12zM156 264h12v12h-12zM216 264h12v12h-12zM336 264h12v12h-12zM348 264h12v12h-12zM360 264h12v12h-12zM408 264h12v12h-12zM636 264h12v12h-12zM648 264h12v12h-12zM168 276h12v12h-12zM204 276h12v12h-12zM336 276h12v12h-12zM348 276h12v12h-12zM420 276h12v12h-12zM468 276h12v12h-12zM540 276h12v12h-12zM576 276h12v12h-12zM624 276h12v12h-12zM660 276h12v12h-12zM756 276h12v12h-12zM204 288h12v12h-12zM408 288h12v12h-12zM420 288h12v12h-12zM528 288h12v12h-12zM636 288h12v12h-12zM420 300h12v12h-12zM468 300h12v12h-12zM648 300h12v12h-12zM216 312h12v12h-12zM456 312h12v12h-12zM564 312h12v12h-12zM648 312h12v12h-12zM708 312h12v12h-12zM120 324h12v12h-12zM132 324h12v12h-12zM180 324h12v12h-12zM216 324h12v12h-12zM300 324h12v12h-12zM684 324h12v12h-12zM732 324h12v12h-12zM12 336h12v12h-12zM360 336h12v12h-12zM396 336h12v12h-12zM432 336h12v12h-12zM540 336h12v12h-12zM576 336h12v12h-12zM720 336h12v12h-12zM744 336h12v12h-12zM84 348h12v12h-12zM624 348h12v12h-12zM636 348h12v12h-12zM36 360h12v12h-12zM48 360h12v12h-12zM60 360h12v12h-12zM324 360h12v12h-12zM588 360h12v12h-12zM600 360h12v12h-12zM660 360h12v12h-12zM744 360h12v12h-12zM324 372h12v12h-12zM672 372h12v12h-12zM720 372h12v12h-12zM12 384h12v12h-12zM72 384h12v12h-12zM324 384h12v12h-12zM348 384h12v12h-12zM384 384h12v12h-12zM444 384h12v12h-12zM756 384h12v12h-12zM180 396h12v12h-12zM228 396h12v12h-12zM396 396h12v12h-12zM36 408h12v12h-12zM48 408h12v12h-12zM228 408h12v12h-12zM252 408h12v12h-12zM372 408h12v12h-12zM396 408h12v12h-12zM528 408h12v12h-12zM588 408h12v12h-12zM612 408h12v12h-12zM72 420h12v12h-12zM156 420h12v12h-12zM300 420h12v12h-12zM360 420h12v12h-12zM744 420h12v12h-12zM0 432h12v12h-12zM24 432h12v12h-12zM228 432h12v12h-12zM408 432h12v12h-12zM444 432h12v12h-12zM492 432h12v12h-12zM516 432h12v12h-12zM540 432h12v12h-12zM696 432h12v12h-12zM756 432h12v12h-12zM24 444h12v12h-12zM276 444h12v12h-12zM312 444h12v12h-12zM336 444h12v12h-12zM720 444h12v12h-12zM48 456h12v12h-12zM132 456h12v12h-12zM372 456h12v12h-12zM720 456h12v12h-12zM192 468h12v12h-12zM204 468h12v12h-12zM396 468h12v12h-12zM420 468h12v12h-12zM552 468h12v12h-12zM636 468h12v12h-12zM648 468h12v12h-12z"/><path fill="#bce4f2" d="M300 0h12v12h-12zM408 0h12v12h-12zM420 0h12v12h-12zM444 0h12v12h-12zM588 0h12v12h-12zM36 12h12v12h-12zM72 12h12v12h-12zM144 12h12v12h-12zM192 12h12v12h-12zM672 12h12v12h-12zM696 12h12v12h-12zM720 12h12v12h-12zM156 24h12v12h-12zM180 24h12v12h-12zM192 24h12v12h-12zM492 24h12v12h-12zM528 24h12v12h-12zM72 36h12v12h-12zM120 36h12v12h-12zM312 36h12v12h-12zM324 36h12v12h-12zM396 36h12v12h-12zM456 36h12v12h-12zM480 36h12v12h-12zM732 36h12v12h-12zM24 48h12v12h-12zM204 48h12v12h-12zM300 48h12v12h-12zM540 48h12v12h-12zM156 60h12v12h-12zM264 60h12v12h-12zM360 60h12v12h-12zM432 60h12v12h-12zM504 60h12v12h-12zM756 60h12v12h-12zM360 72h12v12h-12zM456 72h12v12h-12zM588 72h12v12h-12zM612 84h12v12h-12zM12 96h12v12h-12zM180 96h12v12h-12zM252 96h12v12h-12zM264 96h12v12h-12zM108 108h12v12h-12zM192 108h12v12h-12zM252 108h12v12h-12zM432 108h12v12h-12zM588 108h12v12h-12zM252 120h12v12h-12zM588 120h12v12h-12zM24 132h12v12h-12zM132 132h12v12h-12zM396 132h12v12h-12zM528 132h12v12h-12zM552 132h12v12h-12zM588 132h12v12h-12zM636 132h12v12h-12zM60 144h12v12h-12zM216 144h12v12h-12zM288 144h12v12h-12zM432 144h12v12h-12zM588 144h12v12h-12zM744 144h12v12h-12zM12 156h12v12h-12zM132 156h12v12h-12zM528 156h12v12h-12zM744 156h12v12h-12zM240 168h12v12h-12zM720 168h12v12h-12zM12 180h12v12h-12zM180 180h12v12h-12zM228 180h12v12h-12zM288 180h12v12h-12zM504 180h12v12h-12zM636 180h12v12h-12zM648 180h12v12h-12zM744 180h12v12h-12zM24 192h12v12h-12zM408 192h12v12h-12zM516 192h12v12h-12zM540 192h12v12h-12zM576 192h12v12h-12zM264 204h12v12h-12zM300 204h12v12h-12zM528 204h12v12h-12zM600 204h12v12h-12zM612 204h12v12h-12zM624 204h12v12h-12zM672 204h12v12h-12zM720 204h12v12h-12zM744 204h12v12h-12zM108 216h12v12h-12zM144 216h12v12h-12zM252 216h12v12h-12zM264 216h12v12h-12zM624 216h12v12h-12zM108 228h12v12h-12zM468 228h12v12h-12zM540 228h12v12h-12zM552 228h12v12h-12zM156 240h12v12h-12zM192 240h12v12h-12zM264 240h12v12h-12zM312 240h12v12h-12zM540 240h12v12h-12zM696 240h12v12h-12zM48 252h12v12h-12zM528 252h12v12h-12zM576 252h12v12h-12zM756 252h12v12h-12zM756 264h12v12h-12zM60 276h12v12h-12zM408 276h12v12h-12zM432 276h12v12h-12zM528 276h12v12h-12zM552 276h12v12h-12zM612 288h12v12h-12zM624 288h12v12h-12zM744 288h12v12h-12zM36 300h12v12h-12zM60 300h12v12h-12zM108 300h12v12h-12zM168 300h12v12h-12zM228 300h12v12h-12zM240 300h12v12h-12zM276 300h12v12h-12zM288 300h12v12h-12zM528 300h12v12h-12zM636 300h12v12h-12zM660 300h12v12h-12zM120 312h12v12h-12zM204 312h12v12h-12zM396 312h12v12h-12zM60 324h12v12h-12zM144 324h12v12h-12zM384 324h12v12h-12zM396 324h12v12h-12zM408 324h12v12h-12zM420 324h12v12h-12zM660 324h12v12h-12zM708 324h12v12h-12zM720 324h12v12h-12zM24 336h12v12h-12zM36 336h12v12h-12zM252 336h12v12h-12zM348 336h12v12h-12zM444 336h12v12h-12zM456 336h12v12h-12zM588 336h12v12h-12zM96 348h12v12h-12zM300 348h12v12h-12zM348 348h12v12h-12zM84 360h12v12h-12zM732 360h12v12h-12zM0 372h12v12h-12zM72 372h12v12h-12zM372 372h12v12h-12zM384 372h12v12h-12zM444 372h12v12h-12zM576 372h12v12h-12zM132 384h12v12h-12zM276 384h12v12h-12zM336 384h12v12h-12zM540 384h12v12h-12zM648 384h12v12h-12zM96 396h12v12h-12zM192 396h12v12h-12zM276 396h12v12h-12zM360 396h12v12h-12zM408 396h12v12h-12zM564 396h12v12h-12zM120 408h12v12h-12zM132 408h12v12h-12zM168 408h12v12h-12zM636 408h12v12h-12zM420 420h12v12h-12zM732 420h12v12h-12zM120 432h12v12h-12zM84 444h12v12h-12zM300 444h12v12h-12zM372 444h12v12h-12zM564 444h12v12h-12zM576 444h12v12h-12zM600 444h12v12h-12zM612 444h12v12h-12zM228 456h12v12h-12zM336 456h12v12h-12zM360 456h12v12h-12zM420 456h12v12h-12z"/><path fill="#8aa7da" d="M312 0h12v12h-12zM432 0h12v12h-12zM468 0h12v12h-12zM312 12h12v12h-12zM444 12h12v12h-12zM564 12h12v12h-12zM684 12h12v12h-12zM360 24h12v12h-12zM456 24h12v12h-12zM672 24h12v12h-12zM36 36h12v12h-12zM360 36h12v12h-12zM420 36h12v12h-12zM588 36h12v12h-12zM648 36h12v12h-12zM660 36h12v12h-12zM168 48h12v12h-12zM324 48h12v12h-12zM552 48h12v12h-12zM576 48h12v12h-12zM588 48h12v12h-12zM684 48h12v12h-12zM204 60h12v12h-12zM528 60h12v12h-12zM576 60h12v12h-12zM612 60h12v12h-12zM624 60h12v12h-12zM684 60h12v12h-12zM204 72h12v12h-12zM216 72h12v12h-12zM396 72h12v12h-12zM444 72h12v12h-12zM696 72h12v12h-12zM720 72h12v12h-12zM732 72h12v12h-12zM24 84h12v12h-12zM168 84h12v12h-12zM180 84h12v12h-12zM564 84h12v12h-12zM408 96h12v12h-12zM432 96h12v12h-12zM480 96h12v12h-12zM60 108h12v12h-12zM120 108h12v12h-12zM348 108h12v12h-12zM444 108h12v12h-12zM636 108h12v12h-12zM132 120h12v12h-12zM480 120h12v12h-12zM36 132h12v12h-12zM48 132h12v12h-12zM192 132h12v12h-12zM252 132h12v12h-12zM264 132h12v12h-12zM348 132h12v12h-12zM12 144h12v12h-12zM240 144h12v12h-12zM336 144h12v12h-12zM516 144h12v12h-12zM576 144h12v12h-12zM360 156h12v12h-12zM444 156h12v12h-12zM600 156h12v12h-12zM72 168h12v12h-12zM192 168h12v12h-12zM480 168h12v12h-12zM216 180h12v12h-12zM252 180h12v12h-12zM324 180h12v12h-12zM348 180h12v12h-12zM456 180h12v12h-12zM600 180h12v12h-12zM660 180h12v12h-12zM720 180h12v12h-12zM0 192h12v12h-12zM276 192h12v12h-12zM324 192h12v12h-12zM372 192h12v12h-12zM576 204h12v12h-12zM732 204h12v12h-12zM84 216h12v12h-12zM228 216h12v12h-12zM276 216h12v12h-12zM300 216h12v12h-12zM324 216h12v12h-12zM396 216h12v12h-12zM468 216h12v12h-12zM492 216h12v12h-12zM516 216h12v12h-12zM552 216h12v12h-12zM744 216h12v12h-12zM72 228h12v12h-12zM216 228h12v12h-12zM240 228h12v12h-12zM432 228h12v12h-12zM444 228h12v12h-12zM636 228h12v12h-12zM696 228h12v12h-12zM276 240h12v12h-12zM384 240h12v12h-12zM468 240h12v12h-12zM516 240h12v12h-12zM684 240h12v12h-12zM720 240h12v12h-12zM744 240h12v12h-12zM72 252h12v12h-12zM84 252h12v12h-12zM360 252h12v12h-12zM516 252h12v12h-12zM144 264h12v12h-12zM264 264h12v12h-12zM276 264h12v12h-12zM504 264h12v12h-12zM624 264h12v12h-12zM324 276h12v12h-12zM444 276h12v12h-12zM504 276h12v12h-12zM612 276h12v12h-12zM48 288h12v12h-12zM72 288h12v12h-12zM84 288h12v12h-12zM180 288h12v12h-12zM384 288h12v12h-12zM432 288h12v12h-12zM444 288h12v12h-12zM516 288h12v12h-12zM540 288h12v12h-12zM708 288h12v12h-12zM84 300h12v12h-12zM120 300h12v12h-12zM192 300h12v12h-12zM696 300h12v12h-12zM24 312h12v12h-12zM264 312h12v12h-12zM324 312h12v12h-12zM468 312h12v12h-12zM24 324h12v12h-12zM528 324h12v12h-12zM576 324h12v12h-12zM756 324h12v12h-12zM228 336h12v12h-12zM336 336h12v12h-12zM408 336h12v12h-12zM60 348h12v12h-12zM72 348h12v12h-12zM120 348h12v12h-12zM312 348h12v12h-12zM324 348h12v12h-12zM420 348h12v12h-12zM444 348h12v12h-12zM612 348h12v12h-12zM96 360h12v12h-12zM372 360h12v12h-12zM480 360h12v12h-12zM48 372h12v12h-12zM60 372h12v12h-12zM96 372h12v12h-12zM264 372h12v12h-12zM708 372h12v12h-12zM0 384h12v12h-12zM48 384h12v12h-12zM60 384h12v12h-12zM288 384h12v12h-12zM300 384h12v12h-12zM468 384h12v12h-12zM552 384h12v12h-12zM660 384h12v12h-12zM672 384h12v12h-12zM684 384h12v12h-12zM288 396h12v12h-12zM324 396h12v12h-12zM480 396h12v12h-12zM624 396h12v12h-12zM648 396h12v12h-12zM744 396h12v12h-12zM0 408h12v12h-12zM156 408h12v12h-12zM216 408h12v12h-12zM684 408h12v12h-12zM720 408h12v12h-12zM756 408h12v12h-12zM24 420h12v12h-12zM180 420h12v12h-12zM264 420h12v12h-12zM276 420h12v12h-12zM336 420h12v12h-12zM432 420h12v12h-12zM444 420h12v12h-12zM516 420h12v12h-12zM576 420h12v12h-12zM624 420h12v12h-12zM48 432h12v12h-12zM84 432h12v12h-12zM180 432h12v12h-12zM204 432h12v12h-12zM276 432h12v12h-12zM288 432h12v12h-12zM624 432h12v12h-12zM684 432h12v12h-12zM108 444h12v12h-12zM120 444h12v12h-12zM132 444h12v12h-12zM648 444h12v12h-12zM732 444h12v12h-12zM120 456h12v12h-12zM300 456h12v12h-12zM180 468h12v12h-12zM432 468h12v12h-12zM660 468h12v12h-12zM732 468h12v12h-12z"/></pattern></defs><polygon points="845,16 845,28 857,28 857,40 869,40 869,52 881,52 881,64 893,64 893,76 905,76 905,88 917,88 917,100 929,100 929,112 941,112 941,124 953,124 953,136 965,136 965,148 977,148 977,160 989,160 989,172 1013,172 1013,184 1025,184 1025,196 1037,196 1037,208 1049,208 1049,220 1061,220 1061,232 1073,232 1073,244 1085,244 1085,256 1097,256 1097,268 1109,268 1109,280 1121,280 1121,292 1133,292 1133,304 1145,304 1145,316 1157,316 1157,328 1169,328 1169,340 1181,340 1181,352 1193,352 1193,364 1205,364 1205,376 1217,376 1217,388 1229,388 1229,400 1241,400 1241,412 1253,412 1253,424 1265,424 1265,436 1277,436 1277,448 1289,448 1289,460 1301,460 1301,472 1313,472 1313,484 1325,484 1325,496 1337,496 1337,508 1349,508 1349,520 1361,520 1361,532 1373,532 1373,544 1385,544 1385,556 1397,556 1397,568 1409,568 1409,580 1421,580 1421,592 1433,592 1433,604 1445,604 1445,616 1457,616 1457,628 1469,628 1469,640 1481,640 1481,652 1493,652 1493,664 1505,664 1505,676 1517,676 1517,688 1529,688 1529,700 1541,700 1541,712 1553,712 1553,724 1565,724 1565,736 1577,736 1577,748 1589,748 1589,760 65,760 65,748 77,748 77,736 89,736 89,724 101,724 101,712 113,712 113,700 125,700 125,688 137,688 137,676 149,676 149,664 161,664 161,652 173,652 173,640 185,640 185,628 197,628 197,616 209,616 209,604 221,604 221,592 233,592 233,580 245,580 245,568 257,568 257,556 269,556 269,544 281,544 281,532 293,532 293,520 305,520 305,508 317,508 317,496 329,496 329,484 341,484 341,472 353,472 353,460 365,460 365,448 377,448 377,436 389,436 389,424 401,424 401,412 413,412 413,400 425,400 425,388 437,388 437,376 449,376 449,364 461,364 461,352 473,352 473,340 485,340 485,328 497,328 497,316 509,316 509,304 521,304 521,292 533,292 533,280 545,280 545,268 557,268 557,256 569,256 569,244 581,244 581,232 593,232 593,220 605,220 605,208 617,208 617,196 629,196 629,184 641,184 641,172 653,172 653,160 665,160 665,148 677,148 677,136 689,136 689,124 701,124 701,112 713,112 713,100 725,100 725,88 737,88 737,76 749,76 749,64 773,64 773,52 785,52 785,40 797,40 797,28 809,28 809,16" fill="url(#pp)"/></svg><svg style="left:435.00px;top:1274.00px;" width="200" height="30" fill="#fff"><use href="#lx" transform="translate(0.00 2.00) scale(3.000)"/><use href="#d1" transform="translate(24.00 2.00) scale(3.000)"/><use href="#d9" transform="translate(48.00 2.00) scale(3.000)"/><use href="#d1" transform="translate(72.00 2.00) scale(3.000)"/><use href="#p44" transform="translate(96.00 2.00) scale(3.000)"/><use href="#ly" transform="translate(120.00 2.00) scale(3.000)"/><use href="#d7" transform="translate(144.00 2.00) scale(3.000)"/><use href="#d2" transform="translate(168.00 2.00) scale(3.000)"/></svg><svg style="left:676.60px;top:1274.00px;" width="224" height="30" fill="#fff"><use href="#uP" transform="translate(0.00 2.00) scale(3.000)"/><use href="#lx" transform="translate(24.00 2.00) scale(3.000)"/><use href="#ll" transform="translate(48.00 2.00) scale(3.000)"/><use href="#ls" transform="translate(72.00 2.00) scale(3.000)"/><use href="#p58" transform="translate(96.00 2.00) scale(3.000)"/><use href="#d4" transform="translate(120.00 2.00) scale(3.000)"/><use href="#d0" transform="translate(144.00 2.00) scale(3.000)"/><use href="#d7" transform="translate(168.00 2.00) scale(3.000)"/><use href="#d5" transform="translate(192.00 2.00) scale(3.000)"/></svg><svg style="left:943.00px;top:1274.00px;" width="176" height="30" fill="#fff"><use href="#d1" transform="translate(0.00 2.00) scale(3.000)"/><use href="#d0" transform="translate(24.00 2.00) scale(3.000)"/><use href="#d0" transform="translate(48.00 2.00) scale(3.000)"/><use href="#d0" transform="translate(72.00 2.00) scale(3.000)"/><use href="#lt" transform="translate(96.00 2.00) scale(3.000)"/><use href="#lp" transform="translate(120.00 2.00) scale(3.000)"/><use href="#ls" transform="translate(144.00 2.00) scale(3.000)"/></svg><svg style="left:1160.50px;top:1274.00px;" width="128" height="30" fill="#fff"><use href="#d6" transform="translate(0.00 2.00) scale(3.000)"/><use href="#d0" transform="translate(24.00 2.00) scale(3.000)"/><use href="#d6" transform="translate(48.00 2.00) scale(3.000)"/><use href="#d4" transform="translate(72.00 2.00) scale(3.000)"/><use href="#d1" transform="translate(96.00 2.00) scale(3.000)"/></svg><svg style="left:1333.90px;top:1274.00px;" width="32" height="30" fill="#fff"><use href="#p91" transform="translate(0.00 2.00) scale(3.000)"/></svg><svg style="left:1354.70px;top:1274.00px;" width="32" height="30" fill="#fff"><use href="#p94" transform="translate(0.00 2.00) scale(3.000)"/></svg><svg style="left:1402.80px;top:1274.00px;" width="32" height="30" fill="#fff"><use href="#p93" transform="translate(0.00 2.00) scale(3.000)"/></svg><div class="btn ctl" style="left:435px;top:1312px;width:199px;height:56px"></div><svg style="left:474.50px;top:1322.00px;" width="128" height="38" fill="#dedede"><use href="#uP" transform="translate(0.00 2.00) scale(4.000)"/><use href="#uA" transform="translate(32.00 12.25) scale(2.750)"/><use href="#uU" transform="translate(54.00 12.25) scale(2.750)"/><use href="#uS" transform="translate(76.00 12.25) scale(2.750)"/><use href="#uE" transform="translate(98.00 12.25) scale(2.750)"/></svg><div class="btn ctl" style="left:654px;top:1312px;width:111px;height:56px"></div><svg style="left:693.50px;top:1322.00px;" width="40" height="38" fill="#dedede"><use href="#p62" transform="translate(0.00 2.00) scale(4.000)"/></svg><div class="btn ctl" style="left:785px;top:1312px;width:109px;height:56px"></div><svg style="left:823.50px;top:1322.00px;" width="40" height="38" fill="#dedede"><use href="#p45" transform="translate(0.00 2.00) scale(4.000)"/></svg><div class="btn ctl" style="left:914px;top:1312px;width:111px;height:56px"></div><svg style="left:953.50px;top:1322.00px;" width="40" height="38" fill="#dedede"><use href="#p43" transform="translate(0.00 2.00) scale(4.000)"/></svg><div class="btn ctl" style="left:1045px;top:1312px;width:199px;height:56px"></div><svg style="left:1084.50px;top:1322.00px;" width="128" height="38" fill="#dedede"><use href="#uR" transform="translate(0.00 2.00) scale(4.000)"/><use href="#uE" transform="translate(32.00 12.25) scale(2.750)"/><use href="#uS" transform="translate(54.00 12.25) scale(2.750)"/><use href="#uE" transform="translate(76.00 12.25) scale(2.750)"/><use href="#uT" transform="translate(98.00 12.25) scale(2.750)"/></svg><div class="btn ctl" style="left:1264px;top:1312px;width:155px;height:56px"></div><svg style="left:1303.50px;top:1322.00px;" width="84" height="38" fill="#dedede"><use href="#uT" transform="translate(0.00 2.00) scale(4.000)"/><use href="#uP" transform="translate(32.00 12.25) scale(2.750)"/><use href="#uS" transform="translate(54.00 12.25) scale(2.750)"/></svg><div class="btn ctl" style="left:1439px;top:1312px;width:177px;height:56px"></div><svg style="left:1478.50px;top:1322.00px;" width="106" height="38" fill="#dedede"><use href="#uI" transform="translate(0.00 2.00) scale(4.000)"/><use href="#uN" transform="translate(32.00 12.25) scale(2.750)"/><use href="#uF" transform="translate(54.00 12.25) scale(2.750)"/><use href="#uO" transform="translate(76.00 12.25) scale(2.750)"/></svg><div class="btn ctl" style="left:1637px;top:1312px;width:175px;height:56px"></div><svg style="left:1675.50px;top:1322.00px;" width="106" height="38" fill="#dedede"><use href="#uM" transform="translate(0.00 2.00) scale(4.000)"/><use href="#uO" transform="translate(32.00 12.25) scale(2.750)"/><use href="#uD" transform="translate(54.00 12.25) scale(2.750)"/><use href="#uS" transform="translate(76.00 12.25) scale(2.750)"/></svg><div class="btn ctl" style="left:1832px;top:1312px;width:265px;height:56px"></div><svg style="left:1871.50px;top:1322.00px;" width="194" height="38" fill="#dedede"><use href="#uS" transform="translate(0.00 2.00) scale(4.000)"/><use href="#uE" transform="translate(32.00 12.25) scale(2.750)"/><use href="#uT" transform="translate(54.00 12.25) scale(2.750)"/><use href="#uT" transform="translate(76.00 12.25) scale(2.750)"/><use href="#uI" transform="translate(98.00 12.25) scale(2.750)"/><use href="#uN" transform="translate(120.00 12.25) scale(2.750)"/><use href="#uG" transform="translate(142.00 12.25) scale(2.750)"/><use href="#uS" transform="translate(164.00 12.25) scale(2.750)"/></svg><div class="btn ctl" style="left:2117px;top:1312px;width:297px;height:56px"></div><svg style="left:2156.50px;top:1322.00px;" width="226" height="38" fill="#dedede"><use href="#uS" transform="translate(0.00 2.00) scale(4.000)"/><use href="#uT" transform="translate(32.00 12.25) scale(2.750)"/><use href="#uA" transform="translate(54.00 12.25) scale(2.750)"/><use href="#uR" transform="translate(76.00 12.25) scale(2.750)"/><use href="#uT" transform="translate(98.00 12.25) scale(2.750)"/><use href="#uO" transform="translate(120.00 2.00) scale(4.000)"/><use href="#uV" transform="translate(152.00 12.25) scale(2.750)"/><use href="#uE" transform="translate(174.00 12.25) scale(2.750)"/><use href="#uR" transform="translate(196.00 12.25) scale(2.750)"/></svg><div style="left:425px;top:1370px;width:2000px;height:70px;overflow:hidden"><div class="btn tool" style="left:10px;top:8px;width:195px;height:56px;background:radial-gradient(ellipse at 50% 60%,#f8dcfc 0,#f0b8f8 60%)"></div><svg class="tdk" style="left:31.50px;top:18.00px;" width="160" height="38" fill="#1e1e1e"><use href="#uP" transform="translate(0.00 2.00) scale(4.000)"/><use href="#uI" transform="translate(32.00 11.75) scale(2.750)"/><use href="#uC" transform="translate(54.00 11.75) scale(2.750)"/><use href="#uK" transform="translate(76.00 11.75) scale(2.750)"/><use href="#uU" transform="translate(98.00 2.00) scale(4.000)"/><use href="#uP" transform="translate(130.00 11.75) scale(2.750)"/></svg><div class="btn tool" style="left:226px;top:8px;width:141px;height:56px;background:linear-gradient(160deg,#fbe496 0%,#c89030 30%,#8a6224 55%,#d8a448 80%,#f0c060 100%)"></div><svg class="tlt" style="left:247.50px;top:18.00px;" width="106" height="38" fill="#ecebe6"><use href="#uS" transform="translate(0.00 2.00) scale(4.000)"/><use href="#uE" transform="translate(32.00 11.75) scale(2.750)"/><use href="#uL" transform="translate(54.00 11.75) scale(2.750)"/><use href="#uL" transform="translate(76.00 11.75) scale(2.750)"/></svg><div class="btn tool" style="left:388px;top:8px;width:141px;height:56px;background:#e83426"></div><svg class="tlt" style="left:409.50px;top:18.00px;" width="106" height="38" fill="#ecebe6"><use href="#uH" transform="translate(0.00 2.00) scale(4.000)"/><use href="#uE" transform="translate(32.00 11.75) scale(2.750)"/><use href="#uA" transform="translate(54.00 11.75) scale(2.750)"/><use href="#uT" transform="translate(76.00 11.75) scale(2.750)"/></svg><div class="btn tool" style="left:550px;top:8px;width:141px;height:56px;background:#0a1ef2"></div><svg class="tlt" style="left:571.50px;top:18.00px;" width="106" height="38" fill="#ecebe6"><use href="#uC" transform="translate(0.00 2.00) scale(4.000)"/><use href="#uO" transform="translate(32.00 11.75) scale(2.750)"/><use href="#uO" transform="translate(54.00 11.75) scale(2.750)"/><use href="#uL" transform="translate(76.00 11.75) scale(2.750)"/></svg><div class="btn tool" style="left:713px;top:8px;width:140px;height:56px;background:#c8d0bc"></div><svg class="tdk" style="left:734.00px;top:18.00px;" width="106" height="38" fill="#1e1e1e"><use href="#uD" transform="translate(0.00 2.00) scale(4.000)"/><use href="#uR" transform="translate(32.00 11.75) scale(2.750)"/><use href="#uA" transform="translate(54.00 11.75) scale(2.750)"/><use href="#uG" transform="translate(76.00 11.75) scale(2.750)"/></svg><div class="btn tool" style="left:875px;top:8px;width:118px;height:56px;background:linear-gradient(135deg,#f4eac4,#d8d2bc 60%,#b0aea6)"></div><svg class="tdk" style="left:896.00px;top:18.00px;" width="84" height="38" fill="#1e1e1e"><use href="#uM" transform="translate(0.00 2.00) scale(4.000)"/><use href="#uI" transform="translate(32.00 11.75) scale(2.750)"/><use href="#uX" transform="translate(54.00 11.75) scale(2.750)"/></svg><div class="btn tool" style="left:1015px;top:8px;width:162px;height:56px;background:#ffff58"></div><svg class="tdk" style="left:1036.00px;top:18.00px;" width="128" height="38" fill="#1e1e1e"><use href="#uS" transform="translate(0.00 2.00) scale(4.000)"/><use href="#uH" transform="translate(32.00 11.75) scale(2.750)"/><use href="#uO" transform="translate(54.00 11.75) scale(2.750)"/><use href="#uC" transform="translate(76.00 11.75) scale(2.750)"/><use href="#uK" transform="translate(98.00 11.75) scale(2.750)"/></svg><div class="btn tool" style="left:1198px;top:8px;width:163px;height:56px;background:linear-gradient(135deg,#666 0%,#8a8a8a 50%,#777 100%)"></div><svg class="tlt" style="left:1219.50px;top:18.00px;" width="128" height="38" fill="#ecebe6"><use href="#uS" transform="translate(0.00 2.00) scale(4.000)"/><use href="#uM" transform="translate(32.00 11.75) scale(2.750)"/><use href="#uA" transform="translate(54.00 11.75) scale(2.750)"/><use href="#uS" transform="translate(76.00 11.75) scale(2.750)"/><use href="#uH" transform="translate(98.00 11.75) scale(2.750)"/></svg><div class="btn tool" style="left:1383px;top:8px;width:250px;height:56px;background:#88f252"></div><svg class="tlt" style="left:1404.00px;top:18.00px;" width="216" height="38" fill="#ecebe6"><use href="#uR" transform="translate(0.00 2.00) scale(4.000)"/><use href="#uA" transform="translate(32.00 11.75) scale(2.750)"/><use href="#uD" transform="translate(54.00 11.75) scale(2.750)"/><use href="#uI" transform="translate(76.00 11.75) scale(2.750)"/><use href="#uA" transform="translate(98.00 11.75) scale(2.750)"/><use href="#uT" transform="translate(120.00 11.75) scale(2.750)"/><use href="#uI" transform="translate(142.00 11.75) scale(2.750)"/><use href="#uO" transform="translate(164.00 11.75) scale(2.750)"/><use href="#uN" transform="translate(186.00 11.75) scale(2.750)"/></svg><div class="btn tool" style="left:1654px;top:8px;width:358px;height:56px;background:linear-gradient(174deg,#a8a8a8 0%,#a4a4a4 48%,#5a5a5a 56%,#111 66%,#000 100%)"></div><svg class="tlt" style="left:1675.00px;top:18.00px;" width="324" height="38" fill="#ecebe6"><use href="#uD" transform="translate(0.00 2.00) scale(4.000)"/><use href="#uE" transform="translate(32.00 11.75) scale(2.750)"/><use href="#uL" transform="translate(54.00 11.75) scale(2.750)"/><use href="#uE" transform="translate(76.00 11.75) scale(2.750)"/><use href="#uT" transform="translate(98.00 11.75) scale(2.750)"/><use href="#uE" transform="translate(120.00 11.75) scale(2.750)"/><use href="#uA" transform="translate(174.00 11.75) scale(2.750)"/><use href="#uL" transform="translate(196.00 11.75) scale(2.750)"/><use href="#uL" transform="translate(218.00 11.75) scale(2.750)"/><use href="#uO" transform="translate(272.00 11.75) scale(2.750)"/><use href="#uF" transform="translate(294.00 11.75) scale(2.750)"/></svg></div><div style="left:425px;top:1444px;width:2000px;height:22px;background:#1c1c1c;border-top:2px solid #2e2e2e;border-bottom:2px solid #2e2e2e"></div><div style="left:431px;top:1450px;width:1798px;height:12px;background:#545454;border-radius:6px"></div><div style="left:425px;top:1466px;width:2000px;height:54px;background:#202020;border-bottom:2px solid #5a5a5a"></div><div style="left:425px;top:1466px;width:725px;height:52px;background:#7b7b7b"></div><div style="left:1764px;top:1466px;width:2px;height:52px;background:#5a5a5a"></div><svg class="tlt" style="left:683.50px;top:1474.00px;" width="216" height="38" fill="#f2f2f2"><use href="#uI" transform="translate(0.00 2.00) scale(4.000)"/><use href="#uN" transform="translate(32.00 11.75) scale(2.750)"/><use href="#uV" transform="translate(54.00 11.75) scale(2.750)"/><use href="#uE" transform="translate(76.00 11.75) scale(2.750)"/><use href="#uN" transform="translate(98.00 11.75) scale(2.750)"/><use href="#uT" transform="translate(120.00 11.75) scale(2.750)"/><use href="#uO" transform="translate(142.00 11.75) scale(2.750)"/><use href="#uR" transform="translate(164.00 11.75) scale(2.750)"/><use href="#uY" transform="translate(186.00 11.75) scale(2.750)"/></svg><svg class="tlt" style="left:1408.00px;top:1474.00px;" width="106" height="38" fill="#e6e6e6"><use href="#uS" transform="translate(0.00 2.00) scale(4.000)"/><use href="#uH" transform="translate(32.00 11.75) scale(2.750)"/><use href="#uO" transform="translate(54.00 11.75) scale(2.750)"/><use href="#uP" transform="translate(76.00 11.75) scale(2.750)"/></svg><svg class="tlt" style="left:2024.50px;top:1474.00px;" width="150" height="38" fill="#e6e6e6"><use href="#uP" transform="translate(0.00 2.00) scale(4.000)"/><use href="#uR" transform="translate(32.00 11.75) scale(2.750)"/><use href="#uI" transform="translate(54.00 11.75) scale(2.750)"/><use href="#uC" transform="translate(76.00 11.75) scale(2.750)"/><use href="#uE" transform="translate(98.00 11.75) scale(2.750)"/><use href="#uS" transform="translate(120.00 11.75) scale(2.750)"/></svg><div class="btn inv" style="left:435px;top:1538px;width:246px;height:56px;background:linear-gradient(160deg,#4e8e2a 0%,#8cb850 45%,#d8dc88 100%)"></div><svg class="tlt" style="left:461.00px;top:1548.00px;" width="202" height="38" fill="#ecebe6"><use href="#uS" transform="translate(0.00 2.00) scale(4.000)"/><use href="#uE" transform="translate(32.00 12.15) scale(2.750)"/><use href="#uE" transform="translate(54.00 12.15) scale(2.750)"/><use href="#uD" transform="translate(76.00 12.15) scale(2.750)"/><use href="#p40" transform="translate(98.00 2.00) scale(4.000)"/><use href="#d5" transform="translate(130.00 2.00) scale(4.000)"/><use href="#p41" transform="translate(162.00 2.00) scale(4.000)"/></svg><div class="btn inv" style="left:702px;top:1538px;width:267px;height:56px;background:#d6dce6"></div><svg class="tdk" style="left:727.50px;top:1548.00px;" width="224" height="38" fill="#1e1e1e"><use href="#uC" transform="translate(0.00 2.00) scale(4.000)"/><use href="#uL" transform="translate(32.00 12.15) scale(2.750)"/><use href="#uO" transform="translate(54.00 12.15) scale(2.750)"/><use href="#uU" transform="translate(76.00 12.15) scale(2.750)"/><use href="#uD" transform="translate(98.00 12.15) scale(2.750)"/><use href="#p40" transform="translate(120.00 2.00) scale(4.000)"/><use href="#d7" transform="translate(152.00 2.00) scale(4.000)"/><use href="#p41" transform="translate(184.00 2.00) scale(4.000)"/></svg><div class="btn inv" style="left:990px;top:1538px;width:536px;height:56px;background:linear-gradient(172deg,#fbe59a 0%,#d8a850 30%,#a07028 50%,#c89040 75%,#f0b860 100%)"></div><svg class="tlt" style="left:1016.00px;top:1548.00px;" width="492" height="38" fill="#ecebe6"><use href="#uG" transform="translate(0.00 2.00) scale(4.000)"/><use href="#uO" transform="translate(32.00 12.15) scale(2.750)"/><use href="#uL" transform="translate(54.00 12.15) scale(2.750)"/><use href="#uD" transform="translate(76.00 12.15) scale(2.750)"/><use href="#uC" transform="translate(98.00 2.00) scale(4.000)"/><use href="#uO" transform="translate(130.00 12.15) scale(2.750)"/><use href="#uI" transform="translate(152.00 12.15) scale(2.750)"/><use href="#uN" transform="translate(174.00 12.15) scale(2.750)"/><use href="#p40" transform="translate(196.00 2.00) scale(4.000)"/><use href="#d2" transform="translate(228.00 2.00) scale(4.000)"/><use href="#d1" transform="translate(260.00 2.00) scale(4.000)"/><use href="#d5" transform="translate(292.00 2.00) scale(4.000)"/><use href="#d7" transform="translate(324.00 2.00) scale(4.000)"/><use href="#d4" transform="translate(356.00 2.00) scale(4.000)"/><use href="#p46" transform="translate(388.00 2.00) scale(4.000)"/><use href="#d2" transform="translate(420.00 2.00) scale(4.000)"/><use href="#p41" transform="translate(452.00 2.00) scale(4.000)"/></svg><div class="btn inv" style="left:1547px;top:1538px;width:313px;height:56px;background:#5a9e4e"></div><svg class="tlt" style="left:1573.50px;top:1548.00px;" width="268" height="38" fill="#ecebe6"><use href="#uS" transform="translate(0.00 2.00) scale(4.000)"/><use href="#uA" transform="translate(32.00 12.15) scale(2.750)"/><use href="#uP" transform="translate(54.00 12.15) scale(2.750)"/><use href="#uL" transform="translate(76.00 12.15) scale(2.750)"/><use href="#uI" transform="translate(98.00 12.15) scale(2.750)"/><use href="#uN" transform="translate(120.00 12.15) scale(2.750)"/><use href="#uG" transform="translate(142.00 12.15) scale(2.750)"/><use href="#p40" transform="translate(164.00 2.00) scale(4.000)"/><use href="#d9" transform="translate(196.00 2.00) scale(4.000)"/><use href="#p41" transform="translate(228.00 2.00) scale(4.000)"/></svg><div class="btn inv" style="left:1880px;top:1538px;width:245px;height:56px;background:#7b6b58"></div><svg class="tlt" style="left:1905.50px;top:1548.00px;" width="202" height="38" fill="#ecebe6"><use href="#uR" transform="translate(0.00 2.00) scale(4.000)"/><use href="#uO" transform="translate(32.00 12.15) scale(2.750)"/><use href="#uO" transform="translate(54.00 12.15) scale(2.750)"/><use href="#uT" transform="translate(76.00 12.15) scale(2.750)"/><use href="#p40" transform="translate(98.00 2.00) scale(4.000)"/><use href="#d2" transform="translate(130.00 2.00) scale(4.000)"/><use href="#p41" transform="translate(162.00 2.00) scale(4.000)"/></svg><div class="btn inv" style="left:2146px;top:1538px;width:269px;height:56px;background:linear-gradient(135deg,#5e5442,#3e3628)"></div><svg class="tlt" style="left:2172.50px;top:1548.00px;" width="224" height="38" fill="#ecebe6"><use href="#uF" transform="translate(0.00 2.00) scale(4.000)"/><use href="#uI" transform="translate(32.00 12.15) scale(2.750)"/><use href="#uB" transform="translate(54.00 12.15) scale(2.750)"/><use href="#uE" transform="translate(76.00 12.15) scale(2.750)"/><use href="#uR" transform="translate(98.00 12.15) scale(2.750)"/><use href="#p40" transform="translate(120.00 2.00) scale(4.000)"/><use href="#d1" transform="translate(152.00 2.00) scale(4.000)"/><use href="#p41" transform="translate(184.00 2.00) scale(4.000)"/></svg><div class="btn inv" style="left:435px;top:1604px;width:402px;height:56px;background:#52b83a"></div><svg class="tlt" style="left:464.00px;top:1614.00px;" width="352" height="38" fill="#ecebe6"><use href="#uP" transform="translate(0.00 2.00) scale(4.000)"/><use href="#uL" transform="translate(32.00 12.15) scale(2.750)"/><use href="#uA" transform="translate(54.00 12.15) scale(2.750)"/><use href="#uN" transform="translate(76.00 12.15) scale(2.750)"/><use href="#uT" transform="translate(98.00 12.15) scale(2.750)"/><use href="#p40" transform="translate(120.00 2.00) scale(4.000)"/><use href="#d4" transform="translate(152.00 2.00) scale(4.000)"/><use href="#d0" transform="translate(184.00 2.00) scale(4.000)"/><use href="#d0" transform="translate(216.00 2.00) scale(4.000)"/><use href="#d6" transform="translate(248.00 2.00) scale(4.000)"/><use href="#d1" transform="translate(280.00 2.00) scale(4.000)"/><use href="#p41" transform="translate(312.00 2.00) scale(4.000)"/></svg><div class="btn inv" style="left:858px;top:1604px;width:513px;height:56px;background:#52ba92"></div><svg class="tlt" style="left:887.50px;top:1614.00px;" width="462" height="38" fill="#ecebe6"><use href="#uF" transform="translate(0.00 2.00) scale(4.000)"/><use href="#uR" transform="translate(32.00 12.15) scale(2.750)"/><use href="#uO" transform="translate(54.00 12.15) scale(2.750)"/><use href="#uZ" transform="translate(76.00 12.15) scale(2.750)"/><use href="#uE" transform="translate(98.00 12.15) scale(2.750)"/><use href="#uN" transform="translate(120.00 12.15) scale(2.750)"/><use href="#uP" transform="translate(142.00 2.00) scale(4.000)"/><use href="#uL" transform="translate(174.00 12.15) scale(2.750)"/><use href="#uA" transform="translate(196.00 12.15) scale(2.750)"/><use href="#uN" transform="translate(218.00 12.15) scale(2.750)"/><use href="#uT" transform="translate(240.00 12.15) scale(2.750)"/><use href="#p40" transform="translate(262.00 2.00) scale(4.000)"/><use href="#d4" transform="translate(294.00 2.00) scale(4.000)"/><use href="#d8" transform="translate(326.00 2.00) scale(4.000)"/><use href="#d3" transform="translate(358.00 2.00) scale(4.000)"/><use href="#d1" transform="translate(390.00 2.00) scale(4.000)"/><use href="#p41" transform="translate(422.00 2.00) scale(4.000)"/></svg><div class="btn inv" style="left:1391px;top:1604px;width:338px;height:56px;background:#383838"></div><svg class="tlt" style="left:1420.00px;top:1614.00px;" width="288" height="38" fill="#ecebe6"><use href="#uS" transform="translate(0.00 2.00) scale(4.000)"/><use href="#uM" transform="translate(32.00 12.15) scale(2.750)"/><use href="#uO" transform="translate(54.00 12.15) scale(2.750)"/><use href="#uK" transform="translate(76.00 12.15) scale(2.750)"/><use href="#uE" transform="translate(98.00 12.15) scale(2.750)"/><use href="#p40" transform="translate(120.00 2.00) scale(4.000)"/><use href="#d2" transform="translate(152.00 2.00) scale(4.000)"/><use href="#d5" transform="translate(184.00 2.00) scale(4.000)"/><use href="#d9" transform="translate(216.00 2.00) scale(4.000)"/><use href="#p41" transform="translate(248.00 2.00) scale(4.000)"/></svg><div class="btn inv" style="left:1750px;top:1604px;width:315px;height:56px;background:linear-gradient(135deg,#6e4e30,#4a3420)"></div><svg class="tlt" style="left:1778.50px;top:1614.00px;" width="266" height="38" fill="#ecebe6"><use href="#uD" transform="translate(0.00 2.00) scale(4.000)"/><use href="#uI" transform="translate(32.00 12.15) scale(2.750)"/><use href="#uR" transform="translate(54.00 12.15) scale(2.750)"/><use href="#uT" transform="translate(76.00 12.15) scale(2.750)"/><use href="#p40" transform="translate(98.00 2.00) scale(4.000)"/><use href="#d2" transform="translate(130.00 2.00) scale(4.000)"/><use href="#d2" transform="translate(162.00 2.00) scale(4.000)"/><use href="#d0" transform="translate(194.00 2.00) scale(4.000)"/><use href="#p41" transform="translate(226.00 2.00) scale(4.000)"/></svg><div class="btn inv" style="left:2086px;top:1604px;width:329px;height:56px;background:#a2ccfc"></div><svg class="tdk" style="left:2115.50px;top:1614.00px;" width="278" height="38" fill="#1e1e1e"><use href="#uO" transform="translate(0.00 2.00) scale(4.000)"/><use href="#uX" transform="translate(32.00 12.15) scale(2.750)"/><use href="#uY" transform="translate(54.00 12.15) scale(2.750)"/><use href="#uG" transform="translate(76.00 12.15) scale(2.750)"/><use href="#uE" transform="translate(98.00 12.15) scale(2.750)"/><use href="#uN" transform="translate(120.00 12.15) scale(2.750)"/><use href="#p40" transform="translate(142.00 2.00) scale(4.000)"/><use href="#d2" transform="translate(174.00 2.00) scale(4.000)"/><use href="#d8" transform="translate(206.00 2.00) scale(4.000)"/><use href="#p41" transform="translate(238.00 2.00) scale(4.000)"/></svg><div class="btn inv" style="left:435px;top:1670px;width:432px;height:56px;background:linear-gradient(160deg,#f07030 0%,#f8a838 45%,#f07830 75%,#e84a26 100%)"></div><svg class="tlt" style="left:490.00px;top:1680.00px;" width="330" height="38" fill="#ecebe6"><use href="#uF" transform="translate(0.00 2.00) scale(4.000)"/><use href="#uI" transform="translate(32.00 12.15) scale(2.750)"/><use href="#uR" transform="translate(54.00 12.15) scale(2.750)"/><use href="#uE" transform="translate(76.00 12.15) scale(2.750)"/><use href="#p40" transform="translate(98.00 2.00) scale(4.000)"/><use href="#d1" transform="translate(130.00 2.00) scale(4.000)"/><use href="#d9" transform="translate(162.00 2.00) scale(4.000)"/><use href="#d0" transform="translate(194.00 2.00) scale(4.000)"/><use href="#d9" transform="translate(226.00 2.00) scale(4.000)"/><use href="#d8" transform="translate(258.00 2.00) scale(4.000)"/><use href="#p41" transform="translate(290.00 2.00) scale(4.000)"/></svg><div class="btn inv" style="left:888px;top:1670px;width:445px;height:56px;background:linear-gradient(160deg,#6420d8 0%,#9c74e0 50%,#7428e4 100%)"></div><svg class="tlt" style="left:943.50px;top:1680.00px;" width="342" height="38" fill="#ecebe6"><use href="#uP" transform="translate(0.00 2.00) scale(4.000)"/><use href="#uL" transform="translate(32.00 12.15) scale(2.750)"/><use href="#uA" transform="translate(54.00 12.15) scale(2.750)"/><use href="#uS" transform="translate(76.00 12.15) scale(2.750)"/><use href="#uM" transform="translate(98.00 12.15) scale(2.750)"/><use href="#uA" transform="translate(120.00 12.15) scale(2.750)"/><use href="#p40" transform="translate(142.00 2.00) scale(4.000)"/><use href="#d1" transform="translate(174.00 2.00) scale(4.000)"/><use href="#d3" transform="translate(206.00 2.00) scale(4.000)"/><use href="#d5" transform="translate(238.00 2.00) scale(4.000)"/><use href="#d6" transform="translate(270.00 2.00) scale(4.000)"/><use href="#p41" transform="translate(302.00 2.00) scale(4.000)"/></svg><div class="btn inv" style="left:1354px;top:1670px;width:336px;height:56px;background:#e6d890"></div><svg class="tlt" style="left:1409.00px;top:1680.00px;" width="234" height="38" fill="#ecebe6"><use href="#uS" transform="translate(0.00 2.00) scale(4.000)"/><use href="#uA" transform="translate(32.00 12.15) scale(2.750)"/><use href="#uN" transform="translate(54.00 12.15) scale(2.750)"/><use href="#uD" transform="translate(76.00 12.15) scale(2.750)"/><use href="#p40" transform="translate(98.00 2.00) scale(4.000)"/><use href="#d3" transform="translate(130.00 2.00) scale(4.000)"/><use href="#d5" transform="translate(162.00 2.00) scale(4.000)"/><use href="#p41" transform="translate(194.00 2.00) scale(4.000)"/></svg><div class="btn inv" style="left:1711px;top:1670px;width:346px;height:56px;background:#9e9e9e"></div><svg class="tlt" style="left:1766.00px;top:1680.00px;" width="244" height="38" fill="#ecebe6"><use href="#uA" transform="translate(0.00 2.00) scale(4.000)"/><use href="#uS" transform="translate(32.00 12.15) scale(2.750)"/><use href="#uH" transform="translate(54.00 12.15) scale(2.750)"/><use href="#p40" transform="translate(76.00 2.00) scale(4.000)"/><use href="#d1" transform="translate(108.00 2.00) scale(4.000)"/><use href="#d3" transform="translate(140.00 2.00) scale(4.000)"/><use href="#d9" transform="translate(172.00 2.00) scale(4.000)"/><use href="#p41" transform="translate(204.00 2.00) scale(4.000)"/></svg><div class="btn inv" style="left:2078px;top:1670px;width:337px;height:56px;background:linear-gradient(135deg,#5a4c44,#6a5c54 50%,#4e423c)"></div><svg class="tlt" style="left:2133.50px;top:1680.00px;" width="234" height="38" fill="#ecebe6"><use href="#uS" transform="translate(0.00 2.00) scale(4.000)"/><use href="#uL" transform="translate(32.00 12.15) scale(2.750)"/><use href="#uA" transform="translate(54.00 12.15) scale(2.750)"/><use href="#uG" transform="translate(76.00 12.15) scale(2.750)"/><use href="#p40" transform="translate(98.00 2.00) scale(4.000)"/><use href="#d3" transform="translate(130.00 2.00) scale(4.000)"/><use href="#d3" transform="translate(162.00 2.00) scale(4.000)"/><use href="#p41" transform="translate(194.00 2.00) scale(4.000)"/></svg><div class="btn inv" style="left:435px;top:1736px;width:426px;height:56px;background:linear-gradient(160deg,#7a5a30,#6a4622)"></div><svg class="tlt" style="left:459.00px;top:1746.00px;" width="386" height="38" fill="#ecebe6"><use href="#uD" transform="translate(0.00 2.00) scale(4.000)"/><use href="#uE" transform="translate(32.00 12.15) scale(2.750)"/><use href="#uA" transform="translate(54.00 12.15) scale(2.750)"/><use href="#uD" transform="translate(76.00 12.15) scale(2.750)"/><use href="#uP" transform="translate(98.00 2.00) scale(4.000)"/><use href="#uL" transform="translate(130.00 12.15) scale(2.750)"/><use href="#uA" transform="translate(152.00 12.15) scale(2.750)"/><use href="#uN" transform="translate(174.00 12.15) scale(2.750)"/><use href="#uT" transform="translate(196.00 12.15) scale(2.750)"/><use href="#p40" transform="translate(218.00 2.00) scale(4.000)"/><use href="#d1" transform="translate(250.00 2.00) scale(4.000)"/><use href="#d1" transform="translate(282.00 2.00) scale(4.000)"/><use href="#d6" transform="translate(314.00 2.00) scale(4.000)"/><use href="#p41" transform="translate(346.00 2.00) scale(4.000)"/></svg><div class="btn inv" style="left:881px;top:1736px;width:358px;height:56px;background:linear-gradient(160deg,#fce6a8,#f8cc94)"></div><svg class="tdk" style="left:904.00px;top:1746.00px;" width="320" height="38" fill="#1e1e1e"><use href="#uE" transform="translate(0.00 2.00) scale(4.000)"/><use href="#uM" transform="translate(32.00 12.15) scale(2.750)"/><use href="#uB" transform="translate(54.00 12.15) scale(2.750)"/><use href="#uE" transform="translate(76.00 12.15) scale(2.750)"/><use href="#uR" transform="translate(98.00 12.15) scale(2.750)"/><use href="#p40" transform="translate(120.00 2.00) scale(4.000)"/><use href="#d5" transform="translate(152.00 2.00) scale(4.000)"/><use href="#d6" transform="translate(184.00 2.00) scale(4.000)"/><use href="#d8" transform="translate(216.00 2.00) scale(4.000)"/><use href="#d2" transform="translate(248.00 2.00) scale(4.000)"/><use href="#p41" transform="translate(280.00 2.00) scale(4.000)"/></svg><div class="btn inv" style="left:1260px;top:1736px;width:481px;height:56px;background:#2a2a2a"></div><svg class="tlt" style="left:1283.50px;top:1746.00px;" width="442" height="38" fill="#ecebe6"><use href="#uC" transform="translate(0.00 2.00) scale(4.000)"/><use href="#uA" transform="translate(32.00 12.15) scale(2.750)"/><use href="#uR" transform="translate(54.00 12.15) scale(2.750)"/><use href="#uB" transform="translate(76.00 12.15) scale(2.750)"/><use href="#uO" transform="translate(98.00 12.15) scale(2.750)"/><use href="#uN" transform="translate(120.00 12.15) scale(2.750)"/><use href="#uD" transform="translate(142.00 2.00) scale(4.000)"/><use href="#uI" transform="translate(174.00 12.15) scale(2.750)"/><use href="#uO" transform="translate(196.00 12.15) scale(2.750)"/><use href="#uX" transform="translate(218.00 12.15) scale(2.750)"/><use href="#uI" transform="translate(240.00 12.15) scale(2.750)"/><use href="#uD" transform="translate(262.00 12.15) scale(2.750)"/><use href="#uE" transform="translate(284.00 12.15) scale(2.750)"/><use href="#p40" transform="translate(306.00 2.00) scale(4.000)"/><use href="#d1" transform="translate(338.00 2.00) scale(4.000)"/><use href="#d3" transform="translate(370.00 2.00) scale(4.000)"/><use href="#p41" transform="translate(402.00 2.00) scale(4.000)"/></svg><div class="btn inv" style="left:1763px;top:1736px;width:325px;height:56px;background:linear-gradient(160deg,#f08430,#e85222)"></div><svg class="tlt" style="left:1785.50px;top:1746.00px;" width="288" height="38" fill="#ecebe6"><use href="#uM" transform="translate(0.00 2.00) scale(4.000)"/><use href="#uA" transform="translate(32.00 12.15) scale(2.750)"/><use href="#uG" transform="translate(54.00 12.15) scale(2.750)"/><use href="#uM" transform="translate(76.00 12.15) scale(2.750)"/><use href="#uA" transform="translate(98.00 12.15) scale(2.750)"/><use href="#p40" transform="translate(120.00 2.00) scale(4.000)"/><use href="#d1" transform="translate(152.00 2.00) scale(4.000)"/><use href="#d5" transform="translate(184.00 2.00) scale(4.000)"/><use href="#d1" transform="translate(216.00 2.00) scale(4.000)"/><use href="#p41" transform="translate(248.00 2.00) scale(4.000)"/></svg><div class="btn inv" style="left:2109px;top:1736px;width:306px;height:56px;background:#808080"></div><svg class="tlt" style="left:2133.00px;top:1746.00px;" width="266" height="38" fill="#ecebe6"><use href="#uW" transform="translate(0.00 2.00) scale(4.000)"/><use href="#uA" transform="translate(32.00 12.15) scale(2.750)"/><use href="#uL" transform="translate(54.00 12.15) scale(2.750)"/><use href="#uL" transform="translate(76.00 12.15) scale(2.750)"/><use href="#p40" transform="translate(98.00 2.00) scale(4.000)"/><use href="#d9" transform="translate(130.00 2.00) scale(4.000)"/><use href="#d9" transform="translate(162.00 2.00) scale(4.000)"/><use href="#d9" transform="translate(194.00 2.00) scale(4.000)"/><use href="#p41" transform="translate(226.00 2.00) scale(4.000)"/></svg></body></html>
